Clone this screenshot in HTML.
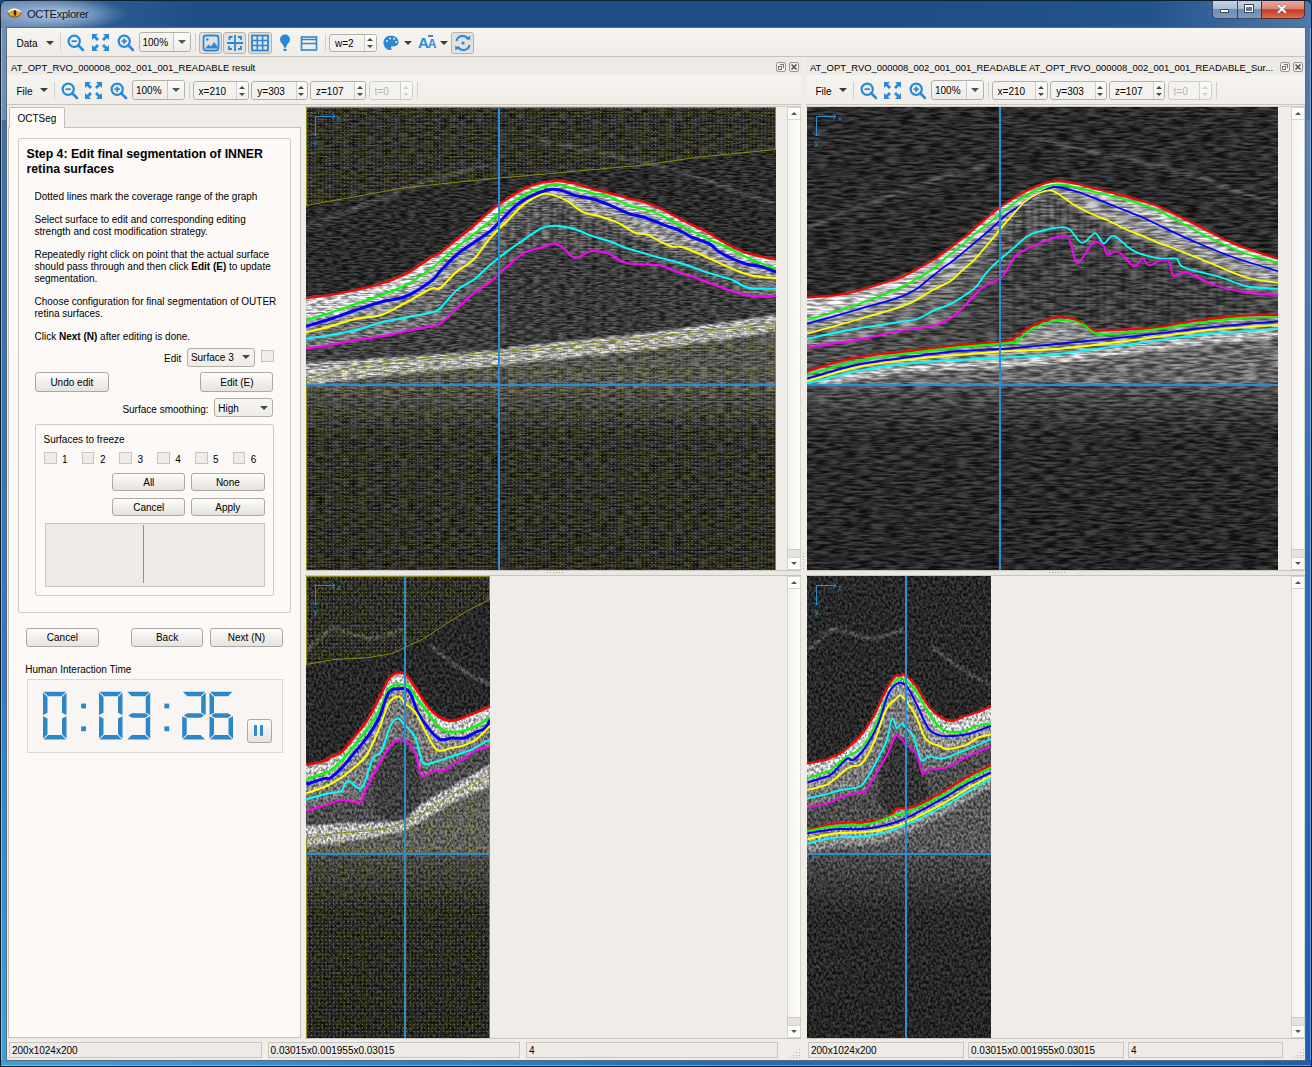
<!DOCTYPE html><html><head><meta charset="utf-8"><style>
html,body{margin:0;padding:0}
body{width:1312px;height:1067px;overflow:hidden;position:relative;font-family:"Liberation Sans", sans-serif;font-size:10px;background:#1b4c86}
</style></head><body>
<div style="position:absolute;left:0px;top:0px;width:1312px;height:1067px;box-sizing:border-box;border:1px solid #0f1e30;border-radius:6px 6px 0 0;background:linear-gradient(90deg,#7090b8 0px,#5f84b2 30px,#2a5a90 110px,#1f4e86 200px,#1d4e86 900px,#22548c 1150px,#4f7aab 1312px);"></div>
<div style="position:absolute;left:1px;top:1040px;width:1310px;height:26px;background:linear-gradient(90deg,#3aa2d8,#2d8fd0 300px,#1f6fc0 700px,#1d5fb0 1312px);"></div>
<div style="position:absolute;left:1px;top:120px;width:6px;height:930px;background:linear-gradient(#3f6ea5,#2d7cc4 60%,#3aa2d8);"></div>
<div style="position:absolute;left:1305px;top:120px;width:6px;height:930px;background:linear-gradient(#5b85b3,#2a6db8 50%,#1d5fb0);"></div>
<div style="position:absolute;left:0px;top:0px;width:200px;height:28px;background:radial-gradient(ellipse 70px 16px at 58px 14px,rgba(220,235,250,0.7),rgba(220,235,250,0) 100%)"></div>
<svg style="position:absolute;left:7px;top:7px;" width="16" height="12" viewBox="7 7 16 12"><ellipse cx="14.5" cy="13" rx="6.5" ry="4" fill="#e6a22a" stroke="#6b3a10" stroke-width="0.8"/><ellipse cx="15" cy="13" rx="1.3" ry="3" fill="#402008"/><path d="M8 12 q6 -6 13 0" fill="none" stroke="#fff" stroke-width="1.2"/></svg>
<div style="position:absolute;left:27px;top:7.70px;font-size:11.2px;line-height:13.44px;font-weight:normal;color:#10182a;white-space:nowrap;letter-spacing:-0.35px;">OCTExplorer</div>
<div style="position:absolute;left:1212px;top:1px;width:26px;height:18px;box-sizing:border-box;border:1px solid #3a4a60;border-top:none;border-radius:0 0 0 5px;background:linear-gradient(#c5d3e3,#a9bdd3 45%,#6d8fb5 50%,#7b9cc0);"></div>
<div style="position:absolute;left:1237px;top:1px;width:25px;height:18px;box-sizing:border-box;border:1px solid #3a4a60;border-top:none;background:linear-gradient(#c5d3e3,#a9bdd3 45%,#6d8fb5 50%,#7b9cc0);"></div>
<div style="position:absolute;left:1261px;top:1px;width:44px;height:18px;box-sizing:border-box;border:1px solid #5a2a20;border-top:none;border-radius:0 0 5px 0;background:linear-gradient(#e9a99b,#d98676 45%,#c43c1f 52%,#d8705a);"></div>
<div style="position:absolute;left:1220px;top:9px;width:9px;height:4px;box-sizing:border-box;background:#fff;border:1px solid #404850;"></div>
<div style="position:absolute;left:1244px;top:4px;width:10px;height:9px;box-sizing:border-box;border:1px solid #404850;background:#fff;"><div style="position:absolute;left:1px;top:2px;width:6px;height:4px;background:#5879a0"></div></div>
<div style="position:absolute;left:1276px;top:1px;font:bold 14px/16px 'Liberation Sans',sans-serif;color:#fff;text-shadow:0 0 1px #333">&#x2715;</div>
<div style="position:absolute;left:6px;top:27px;width:1300px;height:1034px;background:#5a6b80;"></div>
<div style="position:absolute;left:7px;top:28px;width:1298px;height:1032px;background:#f0ede8;"></div>
<div style="position:absolute;left:7px;top:28px;width:1298px;height:28px;background:linear-gradient(#f7f5f1,#efece7);"></div>
<div style="position:absolute;left:7px;top:56px;width:1298px;height:1px;background:#c6c3be;"></div>
<div style="position:absolute;left:16.5px;top:38.03px;font-size:10px;line-height:12.0px;font-weight:normal;color:#000;white-space:nowrap;">Data</div>
<div style="position:absolute;left:46.0px;top:40.5px;width:0;height:0;border-left:4.0px solid transparent;border-right:4.0px solid transparent;border-top:4.0px solid #3a3a3a"></div>
<div style="position:absolute;left:60px;top:33px;width:1px;height:18px;background:#d3d0cb;"></div>
<svg style="position:absolute;left:67px;top:34px;" width="18" height="18" viewBox="67 34 18 18"><circle cx="74.2" cy="41.2" r="5.6" fill="none" stroke="#2a88d8" stroke-width="2.2"/><line x1="78.3" y1="45.3" x2="83" y2="50" stroke="#2a88d8" stroke-width="2.6" stroke-linecap="round"/><line x1="71.5" y1="41.2" x2="76.9" y2="41.2" stroke="#2a88d8" stroke-width="1.8"/></svg>
<svg style="position:absolute;left:92px;top:34px;" width="18" height="18" viewBox="92 34 18 18"><g fill="#2a88d8">
<path d="M92 34h6l-2 2 3 3-2 2-3-3-2 2z"/>
<path d="M109 34v6l-2-2-3 3-2-2 3-3-2-2z"/>
<path d="M92 51v-6l2 2 3-3 2 2-3 3 2 2z"/>
<path d="M109 51h-6l2-2-3-3 2-2 3 3 2-2z"/></g></svg>
<svg style="position:absolute;left:117px;top:34px;" width="18" height="18" viewBox="117 34 18 18"><circle cx="124.2" cy="41.2" r="5.6" fill="none" stroke="#2a88d8" stroke-width="2.2"/><line x1="128.3" y1="45.3" x2="133" y2="50" stroke="#2a88d8" stroke-width="2.6" stroke-linecap="round"/><line x1="121.5" y1="41.2" x2="126.9" y2="41.2" stroke="#2a88d8" stroke-width="1.8"/><line x1="124.2" y1="38.5" x2="124.2" y2="43.9" stroke="#2a88d8" stroke-width="1.8"/></svg>
<div style="position:absolute;left:138.5px;top:32.3px;width:52.0px;height:19.800000000000004px;box-sizing:border-box;border:1px solid #b3b0ab;border-radius:3px;background:linear-gradient(#f7f5f2,#efece8);"></div>
<div style="position:absolute;left:172.5px;top:33.3px;width:17.0px;height:17.800000000000004px;box-sizing:border-box;border-left:1px solid #c8c5c0;background:linear-gradient(#fbfbfa,#f0eeeb);border-radius:0 2px 2px 0"></div>
<div style="position:absolute;left:177.5px;top:40.2px;width:0;height:0;border-left:4.0px solid transparent;border-right:4.0px solid transparent;border-top:4.0px solid #555"></div>
<div style="position:absolute;left:142.5px;top:37.34px;font-size:10px;line-height:12.0px;font-weight:normal;color:#000;white-space:nowrap;">100%</div>
<div style="position:absolute;left:195px;top:33px;width:1px;height:18px;background:#d3d0cb;"></div>
<div style="position:absolute;left:199.4px;top:31.9px;width:22.400000000000006px;height:21.700000000000003px;box-sizing:border-box;border:1px solid #b5b2ad;border-radius:3px;background:#e4e1dc;"></div>
<div style="position:absolute;left:223.4px;top:31.9px;width:22.900000000000006px;height:21.700000000000003px;box-sizing:border-box;border:1px solid #b5b2ad;border-radius:3px;background:#e4e1dc;"></div>
<div style="position:absolute;left:248px;top:31.9px;width:23.5px;height:21.700000000000003px;box-sizing:border-box;border:1px solid #b5b2ad;border-radius:3px;background:#e4e1dc;"></div>
<div style="position:absolute;left:451px;top:31.9px;width:23px;height:21.700000000000003px;box-sizing:border-box;border:1px solid #b5b2ad;border-radius:3px;background:#e4e1dc;"></div>
<svg style="position:absolute;left:202px;top:34px;" width="18" height="18" viewBox="202 34 18 18"><rect x="203.5" y="35.5" width="15" height="15" rx="2.5" fill="none" stroke="#2a88d8" stroke-width="1.8"/><circle cx="207.3" cy="39.5" r="1.3" fill="#2a88d8"/><path d="M205 48.5 l3.5-4 2.5 2 3-4.5 3.5 4.5 v2 z" fill="#2a88d8"/></svg>
<svg style="position:absolute;left:226px;top:34px;" width="18" height="18" viewBox="226 34 18 18"><g stroke="#2a88d8" stroke-width="1.8" fill="none"><path d="M235 35v16M227 43h16"/><path d="M229.5 40v-3h3M238 37h3v3M241 46v3h-3M232 49h-3v-3"/></g></svg>
<svg style="position:absolute;left:250px;top:34px;" width="20" height="18" viewBox="250 34 20 18"><rect x="252" y="35.5" width="16" height="15" fill="none" stroke="#2a88d8" stroke-width="1.8"/><g stroke="#2a88d8" stroke-width="1.6"><path d="M257.3 36v14M262.6 36v14M252 40.5h16M252 45.5h16"/></g></svg>
<svg style="position:absolute;left:278px;top:33px;" width="14" height="20" viewBox="278 33 14 20"><circle cx="285" cy="39.5" r="5" fill="#2a88d8"/><path d="M281.5 42 L285 49 L288.5 42z" fill="#2a88d8"/><rect x="283.5" y="49" width="3" height="2" fill="#2a88d8"/></svg>
<svg style="position:absolute;left:300px;top:35px;" width="18" height="16" viewBox="300 35 18 16"><rect x="301.5" y="37" width="15" height="13" fill="none" stroke="#2a88d8" stroke-width="1.6"/><path d="M301.5 39.5h15M301.5 43.5h15" stroke="#2a88d8" stroke-width="1.6"/></svg>
<div style="position:absolute;left:325px;top:34px;width:1px;height:17px;background:#d3d0cb;"></div>
<div style="position:absolute;left:329px;top:33.7px;width:48px;height:18.299999999999997px;box-sizing:border-box;border:1px solid #b3b0ab;border-radius:3px;background:#f4f2ee;"></div>
<div style="position:absolute;left:364px;top:34.7px;width:12px;height:16.299999999999997px;box-sizing:border-box;border-left:1px solid #d0cdc8;background:linear-gradient(#fdfdfc,#f2f0ed);border-radius:0 2px 2px 0"></div>
<div style="position:absolute;left:367.0px;top:38.1px;width:0;height:0;border-left:3.5px solid transparent;border-right:3.5px solid transparent;border-bottom:3.5px solid #4a4a4a"></div>
<div style="position:absolute;left:367.0px;top:45.1px;width:0;height:0;border-left:3.5px solid transparent;border-right:3.5px solid transparent;border-top:3.5px solid #4a4a4a"></div>
<div style="position:absolute;left:335px;top:37.98px;font-size:10px;line-height:12.0px;font-weight:normal;color:#000;white-space:nowrap;">w=2</div>
<svg style="position:absolute;left:382px;top:34px;" width="18" height="18" viewBox="382 34 18 18"><path d="M391 35.5 c-4.5 0 -7.5 3.3 -7.5 7.3 c0 4 3 7.3 6.8 7.3 c1.3 0 1.6-1 1-1.8 c-.7-.9 -.3-2 1-2 h2 c2.5 0 4.3-1.7 4.3-4 c0-3.8 -3.5-6.8 -7.6-6.8z" fill="#2a88d8"/><circle cx="387" cy="41" r="1" fill="#f0ede8"/><circle cx="390" cy="38.5" r="1" fill="#f0ede8"/><circle cx="394" cy="38.8" r="1" fill="#f0ede8"/><circle cx="396.3" cy="42" r="1" fill="#f0ede8"/></svg>
<div style="position:absolute;left:403.5px;top:40.5px;width:0;height:0;border-left:4.0px solid transparent;border-right:4.0px solid transparent;border-top:4.0px solid #3a3a3a"></div>
<div style="position:absolute;left:418px;top:34px;font:bold 15px/18px 'Liberation Sans',sans-serif;color:#2a88d8;letter-spacing:-1px">A<span style="font-size:12px">A</span></div>
<div style="position:absolute;left:428px;top:35px;width:5px;height:1.5px;background:#2a88d8"></div>
<div style="position:absolute;left:440.0px;top:40.5px;width:0;height:0;border-left:4.0px solid transparent;border-right:4.0px solid transparent;border-top:4.0px solid #3a3a3a"></div>
<svg style="position:absolute;left:453px;top:34px;" width="20" height="18" viewBox="453 34 20 18"><g fill="none" stroke="#2a88d8" stroke-width="2"><path d="M456.5 41 a6.3 6.3 0 0 1 11.8 -1.5"/><path d="M469.5 45 a6.3 6.3 0 0 1 -11.8 1.5"/></g><path d="M466 38.5 l4 -3 .5 4.5z M459.5 47.5 l-4 3 -.5 -4.5z" fill="#2a88d8"/><circle cx="463" cy="43" r="1.6" fill="#2a88d8"/></svg>
<div style="position:absolute;left:7px;top:57px;width:794px;height:18px;background:#eeebe6;"></div>
<div style="position:absolute;left:11px;top:62.01px;font-size:9.5px;line-height:11.4px;font-weight:normal;color:#000;white-space:nowrap;">AT_OPT_RVO_000008_002_001_001_READABLE result</div>
<div style="position:absolute;left:776px;top:62px;width:10px;height:10px;box-sizing:border-box;border:1px solid #9a9895;border-radius:2px;background:#f2f0ec;"><div style="position:absolute;left:1px;top:3px;width:4px;height:4px;border:1px solid #777;box-sizing:border-box"></div><div style="position:absolute;left:3px;top:1px;width:4px;height:4px;border:1px solid #777;box-sizing:border-box;border-left:none;border-bottom:none"></div></div>
<div style="position:absolute;left:789px;top:62px;width:10px;height:10px;box-sizing:border-box;border:1px solid #9a9895;border-radius:2px;background:#f2f0ec;"><svg style="position:absolute;left:0;top:0" width="8" height="8"><path d="M1.5 1.5L6.5 6.5M6.5 1.5L1.5 6.5" stroke="#555" stroke-width="1.6"/></svg></div>
<div style="position:absolute;left:7px;top:75px;width:794px;height:29px;background:linear-gradient(#f5f3ef,#f1eee9);"></div>
<div style="position:absolute;left:7px;top:104px;width:794px;height:1px;background:#c9c6c1;"></div>
<div style="position:absolute;left:16.5px;top:85.53px;font-size:10px;line-height:12.0px;font-weight:normal;color:#000;white-space:nowrap;">File</div>
<div style="position:absolute;left:39.5px;top:88.0px;width:0;height:0;border-left:4.0px solid transparent;border-right:4.0px solid transparent;border-top:4.0px solid #3a3a3a"></div>
<div style="position:absolute;left:53.5px;top:82px;width:1px;height:17px;background:#d3d0cb;"></div>
<svg style="position:absolute;left:60.5px;top:81.5px;" width="18" height="18" viewBox="60.5 81.5 18 18"><circle cx="67.7" cy="88.7" r="5.6" fill="none" stroke="#2a88d8" stroke-width="2.2"/><line x1="71.8" y1="92.8" x2="76.5" y2="97.5" stroke="#2a88d8" stroke-width="2.6" stroke-linecap="round"/><line x1="65.0" y1="88.7" x2="70.4" y2="88.7" stroke="#2a88d8" stroke-width="1.8"/></svg>
<svg style="position:absolute;left:85px;top:81.5px;" width="18" height="18" viewBox="85 81.5 18 18"><g fill="#2a88d8">
<path d="M85 81.5h6l-2 2 3 3-2 2-3-3-2 2z"/>
<path d="M102 81.5v6l-2-2-3 3-2-2 3-3-2-2z"/>
<path d="M85 98.5v-6l2 2 3-3 2 2-3 3 2 2z"/>
<path d="M102 98.5h-6l2-2-3-3 2-2 3 3 2-2z"/></g></svg>
<svg style="position:absolute;left:110px;top:81.5px;" width="18" height="18" viewBox="110 81.5 18 18"><circle cx="117.2" cy="88.7" r="5.6" fill="none" stroke="#2a88d8" stroke-width="2.2"/><line x1="121.3" y1="92.8" x2="126" y2="97.5" stroke="#2a88d8" stroke-width="2.6" stroke-linecap="round"/><line x1="114.5" y1="88.7" x2="119.9" y2="88.7" stroke="#2a88d8" stroke-width="1.8"/><line x1="117.2" y1="86.0" x2="117.2" y2="91.4" stroke="#2a88d8" stroke-width="1.8"/></svg>
<div style="position:absolute;left:132px;top:80px;width:52.5px;height:19.5px;box-sizing:border-box;border:1px solid #b3b0ab;border-radius:3px;background:linear-gradient(#f7f5f2,#efece8);"></div>
<div style="position:absolute;left:166.5px;top:81px;width:17.0px;height:17.5px;box-sizing:border-box;border-left:1px solid #c8c5c0;background:linear-gradient(#fbfbfa,#f0eeeb);border-radius:0 2px 2px 0"></div>
<div style="position:absolute;left:171.5px;top:87.75px;width:0;height:0;border-left:4.0px solid transparent;border-right:4.0px solid transparent;border-top:4.0px solid #555"></div>
<div style="position:absolute;left:136px;top:84.88px;font-size:10px;line-height:12.0px;font-weight:normal;color:#000;white-space:nowrap;">100%</div>
<div style="position:absolute;left:188.5px;top:82px;width:1px;height:17px;background:#d3d0cb;"></div>
<div style="position:absolute;left:192.6px;top:81px;width:56.400000000000006px;height:19px;box-sizing:border-box;border:1px solid #b3b0ab;border-radius:3px;background:#f4f2ee;"></div>
<div style="position:absolute;left:236px;top:82px;width:12px;height:17px;box-sizing:border-box;border-left:1px solid #d0cdc8;background:linear-gradient(#fdfdfc,#f2f0ed);border-radius:0 2px 2px 0"></div>
<div style="position:absolute;left:239.0px;top:85.75px;width:0;height:0;border-left:3.5px solid transparent;border-right:3.5px solid transparent;border-bottom:3.5px solid #4a4a4a"></div>
<div style="position:absolute;left:239.0px;top:92.75px;width:0;height:0;border-left:3.5px solid transparent;border-right:3.5px solid transparent;border-top:3.5px solid #4a4a4a"></div>
<div style="position:absolute;left:198.6px;top:85.63px;font-size:10px;line-height:12.0px;font-weight:normal;color:#000;white-space:nowrap;">x=210</div>
<div style="position:absolute;left:251.3px;top:81px;width:56.69999999999999px;height:19px;box-sizing:border-box;border:1px solid #b3b0ab;border-radius:3px;background:#f4f2ee;"></div>
<div style="position:absolute;left:295.5px;top:82px;width:11.5px;height:17px;box-sizing:border-box;border-left:1px solid #d0cdc8;background:linear-gradient(#fdfdfc,#f2f0ed);border-radius:0 2px 2px 0"></div>
<div style="position:absolute;left:298.25px;top:85.75px;width:0;height:0;border-left:3.5px solid transparent;border-right:3.5px solid transparent;border-bottom:3.5px solid #4a4a4a"></div>
<div style="position:absolute;left:298.25px;top:92.75px;width:0;height:0;border-left:3.5px solid transparent;border-right:3.5px solid transparent;border-top:3.5px solid #4a4a4a"></div>
<div style="position:absolute;left:257.3px;top:85.63px;font-size:10px;line-height:12.0px;font-weight:normal;color:#000;white-space:nowrap;">y=303</div>
<div style="position:absolute;left:310px;top:81px;width:56.39999999999998px;height:19px;box-sizing:border-box;border:1px solid #b3b0ab;border-radius:3px;background:#f4f2ee;"></div>
<div style="position:absolute;left:353.8px;top:82px;width:11.599999999999966px;height:17px;box-sizing:border-box;border-left:1px solid #d0cdc8;background:linear-gradient(#fdfdfc,#f2f0ed);border-radius:0 2px 2px 0"></div>
<div style="position:absolute;left:356.6px;top:85.75px;width:0;height:0;border-left:3.5px solid transparent;border-right:3.5px solid transparent;border-bottom:3.5px solid #4a4a4a"></div>
<div style="position:absolute;left:356.6px;top:92.75px;width:0;height:0;border-left:3.5px solid transparent;border-right:3.5px solid transparent;border-top:3.5px solid #4a4a4a"></div>
<div style="position:absolute;left:316px;top:85.63px;font-size:10px;line-height:12.0px;font-weight:normal;color:#000;white-space:nowrap;">z=107</div>
<div style="position:absolute;left:368.6px;top:81px;width:44.0px;height:19px;box-sizing:border-box;border:1px solid #cfccc7;border-radius:3px;background:#f4f2ee;"></div>
<div style="position:absolute;left:399.5px;top:82px;width:12.100000000000023px;height:17px;box-sizing:border-box;border-left:1px solid #d0cdc8;background:linear-gradient(#fdfdfc,#f2f0ed);border-radius:0 2px 2px 0"></div>
<div style="position:absolute;left:402.55px;top:85.75px;width:0;height:0;border-left:3.5px solid transparent;border-right:3.5px solid transparent;border-bottom:3.5px solid #d2d0cc"></div>
<div style="position:absolute;left:402.55px;top:92.75px;width:0;height:0;border-left:3.5px solid transparent;border-right:3.5px solid transparent;border-top:3.5px solid #d2d0cc"></div>
<div style="position:absolute;left:374.6px;top:85.63px;font-size:10px;line-height:12.0px;font-weight:normal;color:#b5b5b5;white-space:nowrap;">t=0</div>
<div style="position:absolute;left:416.7px;top:82px;width:1px;height:17px;background:#d3d0cb;"></div>
<div style="position:absolute;left:7px;top:1038px;width:794px;height:22px;background:#f0ede8;"></div>
<div style="position:absolute;left:9px;top:1042px;width:252.5px;height:16px;box-sizing:border-box;border:1px solid #c9c6c1;background:#eeebe6;"></div>
<div style="position:absolute;left:12px;top:1045.04px;font-size:10px;line-height:12.0px;font-weight:normal;color:#000;white-space:nowrap;">200x1024x200</div>
<div style="position:absolute;left:267.6px;top:1042px;width:252.39999999999998px;height:16px;box-sizing:border-box;border:1px solid #c9c6c1;background:#eeebe6;"></div>
<div style="position:absolute;left:270.6px;top:1045.04px;font-size:10px;line-height:12.0px;font-weight:normal;color:#000;white-space:nowrap;">0.03015x0.001955x0.03015</div>
<div style="position:absolute;left:526px;top:1042px;width:252px;height:16px;box-sizing:border-box;border:1px solid #c9c6c1;background:#eeebe6;"></div>
<div style="position:absolute;left:529px;top:1045.04px;font-size:10px;line-height:12.0px;font-weight:normal;color:#000;white-space:nowrap;">4</div>
<div style="position:absolute;left:806px;top:57px;width:499px;height:18px;background:#eeebe6;"></div>
<div style="position:absolute;left:810px;top:62.06px;font-size:9.45px;line-height:11.34px;font-weight:normal;color:#000;white-space:nowrap;">AT_OPT_RVO_000008_002_001_001_READABLE AT_OPT_RVO_000008_002_001_001_READABLE_Sur...</div>
<div style="position:absolute;left:1280px;top:62px;width:10px;height:10px;box-sizing:border-box;border:1px solid #9a9895;border-radius:2px;background:#f2f0ec;"><div style="position:absolute;left:1px;top:3px;width:4px;height:4px;border:1px solid #777;box-sizing:border-box"></div><div style="position:absolute;left:3px;top:1px;width:4px;height:4px;border:1px solid #777;box-sizing:border-box;border-left:none;border-bottom:none"></div></div>
<div style="position:absolute;left:1293px;top:62px;width:10px;height:10px;box-sizing:border-box;border:1px solid #9a9895;border-radius:2px;background:#f2f0ec;"><svg style="position:absolute;left:0;top:0" width="8" height="8"><path d="M1.5 1.5L6.5 6.5M6.5 1.5L1.5 6.5" stroke="#555" stroke-width="1.6"/></svg></div>
<div style="position:absolute;left:806px;top:75px;width:499px;height:29px;background:linear-gradient(#f5f3ef,#f1eee9);"></div>
<div style="position:absolute;left:806px;top:104px;width:499px;height:1px;background:#c9c6c1;"></div>
<div style="position:absolute;left:815.5px;top:85.53px;font-size:10px;line-height:12.0px;font-weight:normal;color:#000;white-space:nowrap;">File</div>
<div style="position:absolute;left:838.5px;top:88.0px;width:0;height:0;border-left:4.0px solid transparent;border-right:4.0px solid transparent;border-top:4.0px solid #3a3a3a"></div>
<div style="position:absolute;left:852.5px;top:82px;width:1px;height:17px;background:#d3d0cb;"></div>
<svg style="position:absolute;left:859.5px;top:81.5px;" width="18" height="18" viewBox="859.5 81.5 18 18"><circle cx="866.7" cy="88.7" r="5.6" fill="none" stroke="#2a88d8" stroke-width="2.2"/><line x1="870.8" y1="92.8" x2="875.5" y2="97.5" stroke="#2a88d8" stroke-width="2.6" stroke-linecap="round"/><line x1="864.0" y1="88.7" x2="869.4" y2="88.7" stroke="#2a88d8" stroke-width="1.8"/></svg>
<svg style="position:absolute;left:884px;top:81.5px;" width="18" height="18" viewBox="884 81.5 18 18"><g fill="#2a88d8">
<path d="M884 81.5h6l-2 2 3 3-2 2-3-3-2 2z"/>
<path d="M901 81.5v6l-2-2-3 3-2-2 3-3-2-2z"/>
<path d="M884 98.5v-6l2 2 3-3 2 2-3 3 2 2z"/>
<path d="M901 98.5h-6l2-2-3-3 2-2 3 3 2-2z"/></g></svg>
<svg style="position:absolute;left:909px;top:81.5px;" width="18" height="18" viewBox="909 81.5 18 18"><circle cx="916.2" cy="88.7" r="5.6" fill="none" stroke="#2a88d8" stroke-width="2.2"/><line x1="920.3" y1="92.8" x2="925" y2="97.5" stroke="#2a88d8" stroke-width="2.6" stroke-linecap="round"/><line x1="913.5" y1="88.7" x2="918.9" y2="88.7" stroke="#2a88d8" stroke-width="1.8"/><line x1="916.2" y1="86.0" x2="916.2" y2="91.4" stroke="#2a88d8" stroke-width="1.8"/></svg>
<div style="position:absolute;left:931px;top:80px;width:52.5px;height:19.5px;box-sizing:border-box;border:1px solid #b3b0ab;border-radius:3px;background:linear-gradient(#f7f5f2,#efece8);"></div>
<div style="position:absolute;left:965.5px;top:81px;width:17.0px;height:17.5px;box-sizing:border-box;border-left:1px solid #c8c5c0;background:linear-gradient(#fbfbfa,#f0eeeb);border-radius:0 2px 2px 0"></div>
<div style="position:absolute;left:970.5px;top:87.75px;width:0;height:0;border-left:4.0px solid transparent;border-right:4.0px solid transparent;border-top:4.0px solid #555"></div>
<div style="position:absolute;left:935px;top:84.88px;font-size:10px;line-height:12.0px;font-weight:normal;color:#000;white-space:nowrap;">100%</div>
<div style="position:absolute;left:987.5px;top:82px;width:1px;height:17px;background:#d3d0cb;"></div>
<div style="position:absolute;left:991.6px;top:81px;width:56.39999999999998px;height:19px;box-sizing:border-box;border:1px solid #b3b0ab;border-radius:3px;background:#f4f2ee;"></div>
<div style="position:absolute;left:1035px;top:82px;width:12px;height:17px;box-sizing:border-box;border-left:1px solid #d0cdc8;background:linear-gradient(#fdfdfc,#f2f0ed);border-radius:0 2px 2px 0"></div>
<div style="position:absolute;left:1038.0px;top:85.75px;width:0;height:0;border-left:3.5px solid transparent;border-right:3.5px solid transparent;border-bottom:3.5px solid #4a4a4a"></div>
<div style="position:absolute;left:1038.0px;top:92.75px;width:0;height:0;border-left:3.5px solid transparent;border-right:3.5px solid transparent;border-top:3.5px solid #4a4a4a"></div>
<div style="position:absolute;left:997.6px;top:85.63px;font-size:10px;line-height:12.0px;font-weight:normal;color:#000;white-space:nowrap;">x=210</div>
<div style="position:absolute;left:1050.3px;top:81px;width:56.700000000000045px;height:19px;box-sizing:border-box;border:1px solid #b3b0ab;border-radius:3px;background:#f4f2ee;"></div>
<div style="position:absolute;left:1094.5px;top:82px;width:11.5px;height:17px;box-sizing:border-box;border-left:1px solid #d0cdc8;background:linear-gradient(#fdfdfc,#f2f0ed);border-radius:0 2px 2px 0"></div>
<div style="position:absolute;left:1097.25px;top:85.75px;width:0;height:0;border-left:3.5px solid transparent;border-right:3.5px solid transparent;border-bottom:3.5px solid #4a4a4a"></div>
<div style="position:absolute;left:1097.25px;top:92.75px;width:0;height:0;border-left:3.5px solid transparent;border-right:3.5px solid transparent;border-top:3.5px solid #4a4a4a"></div>
<div style="position:absolute;left:1056.3px;top:85.63px;font-size:10px;line-height:12.0px;font-weight:normal;color:#000;white-space:nowrap;">y=303</div>
<div style="position:absolute;left:1109px;top:81px;width:56.40000000000009px;height:19px;box-sizing:border-box;border:1px solid #b3b0ab;border-radius:3px;background:#f4f2ee;"></div>
<div style="position:absolute;left:1152.8px;top:82px;width:11.600000000000136px;height:17px;box-sizing:border-box;border-left:1px solid #d0cdc8;background:linear-gradient(#fdfdfc,#f2f0ed);border-radius:0 2px 2px 0"></div>
<div style="position:absolute;left:1155.6px;top:85.75px;width:0;height:0;border-left:3.5px solid transparent;border-right:3.5px solid transparent;border-bottom:3.5px solid #4a4a4a"></div>
<div style="position:absolute;left:1155.6px;top:92.75px;width:0;height:0;border-left:3.5px solid transparent;border-right:3.5px solid transparent;border-top:3.5px solid #4a4a4a"></div>
<div style="position:absolute;left:1115px;top:85.63px;font-size:10px;line-height:12.0px;font-weight:normal;color:#000;white-space:nowrap;">z=107</div>
<div style="position:absolute;left:1167.6px;top:81px;width:44.0px;height:19px;box-sizing:border-box;border:1px solid #cfccc7;border-radius:3px;background:#f4f2ee;"></div>
<div style="position:absolute;left:1198.5px;top:82px;width:12.099999999999909px;height:17px;box-sizing:border-box;border-left:1px solid #d0cdc8;background:linear-gradient(#fdfdfc,#f2f0ed);border-radius:0 2px 2px 0"></div>
<div style="position:absolute;left:1201.55px;top:85.75px;width:0;height:0;border-left:3.5px solid transparent;border-right:3.5px solid transparent;border-bottom:3.5px solid #d2d0cc"></div>
<div style="position:absolute;left:1201.55px;top:92.75px;width:0;height:0;border-left:3.5px solid transparent;border-right:3.5px solid transparent;border-top:3.5px solid #d2d0cc"></div>
<div style="position:absolute;left:1173.6px;top:85.63px;font-size:10px;line-height:12.0px;font-weight:normal;color:#b5b5b5;white-space:nowrap;">t=0</div>
<div style="position:absolute;left:1215.7px;top:82px;width:1px;height:17px;background:#d3d0cb;"></div>
<div style="position:absolute;left:806px;top:1038px;width:499px;height:22px;background:#f0ede8;"></div>
<div style="position:absolute;left:808px;top:1042px;width:156px;height:16px;box-sizing:border-box;border:1px solid #c9c6c1;background:#eeebe6;"></div>
<div style="position:absolute;left:811px;top:1045.04px;font-size:10px;line-height:12.0px;font-weight:normal;color:#000;white-space:nowrap;">200x1024x200</div>
<div style="position:absolute;left:968px;top:1042px;width:156px;height:16px;box-sizing:border-box;border:1px solid #c9c6c1;background:#eeebe6;"></div>
<div style="position:absolute;left:971px;top:1045.04px;font-size:10px;line-height:12.0px;font-weight:normal;color:#000;white-space:nowrap;">0.03015x0.001955x0.03015</div>
<div style="position:absolute;left:1128px;top:1042px;width:155px;height:16px;box-sizing:border-box;border:1px solid #c9c6c1;background:#eeebe6;"></div>
<div style="position:absolute;left:1131px;top:1045.04px;font-size:10px;line-height:12.0px;font-weight:normal;color:#000;white-space:nowrap;">4</div>
<div style="position:absolute;left:801px;top:57px;width:5px;height:1003px;background:#f0ede8;"></div>
<div style="position:absolute;left:7px;top:105px;width:295px;height:933px;background:#f0ede8;"></div>
<div style="position:absolute;left:8px;top:127px;width:293px;height:911px;box-sizing:border-box;border:1px solid #c3c0bb;background:#fcf9f6;"></div>
<div style="position:absolute;left:8.5px;top:106.5px;width:56px;height:21px;box-sizing:border-box;border:1px solid #c3c0bb;border-bottom:none;border-radius:2px 2px 0 0;background:#fcf9f6;"></div>
<div style="position:absolute;left:17.5px;top:113.23px;font-size:10px;line-height:12.0px;font-weight:normal;color:#000;white-space:nowrap;">OCTSeg</div>
<div style="position:absolute;left:17.6px;top:137.8px;width:273.5px;height:475.5px;box-sizing:border-box;border:1px solid #cfccc7;border-radius:2px;"></div>
<div style="position:absolute;left:26.5px;top:147.06px;font-size:12.3px;line-height:14.76px;font-weight:bold;color:#000;white-space:nowrap;">Step 4: Edit final segmentation of INNER</div>
<div style="position:absolute;left:26.5px;top:161.56px;font-size:12.3px;line-height:14.76px;font-weight:bold;color:#000;white-space:nowrap;">retina surfaces</div>
<div style="position:absolute;left:34.5px;top:191.03px;font-size:10px;line-height:12.0px;font-weight:normal;color:#000;white-space:nowrap;">Dotted lines mark the coverage range of the graph</div>
<div style="position:absolute;left:34.5px;top:214.03px;font-size:10px;line-height:12.0px;font-weight:normal;color:#000;white-space:nowrap;">Select surface to edit and corresponding editing</div>
<div style="position:absolute;left:34.5px;top:226.03px;font-size:10px;line-height:12.0px;font-weight:normal;color:#000;white-space:nowrap;">strength and cost modification strategy.</div>
<div style="position:absolute;left:34.5px;top:249.23px;font-size:10px;line-height:12.0px;font-weight:normal;color:#000;white-space:nowrap;">Repeatedly right click on point that the actual surface</div>
<div style="position:absolute;left:34.5px;top:260.84px;font-size:10px;line-height:12.0px;font-weight:normal;color:#000;white-space:nowrap;">should pass through and then click <b>Edit (E)</b> to update</div>
<div style="position:absolute;left:34.5px;top:272.54px;font-size:10px;line-height:12.0px;font-weight:normal;color:#000;white-space:nowrap;">segmentation.</div>
<div style="position:absolute;left:34.5px;top:296.04px;font-size:10px;line-height:12.0px;font-weight:normal;color:#000;white-space:nowrap;">Choose configuration for final segmentation of OUTER</div>
<div style="position:absolute;left:34.5px;top:307.74px;font-size:10px;line-height:12.0px;font-weight:normal;color:#000;white-space:nowrap;">retina surfaces.</div>
<div style="position:absolute;left:34.5px;top:330.94px;font-size:10px;line-height:12.0px;font-weight:normal;color:#000;white-space:nowrap;">Click <b>Next (N)</b> after editing is done.</div>
<div style="position:absolute;left:164px;top:352.84px;font-size:10px;line-height:12.0px;font-weight:normal;color:#000;white-space:nowrap;">Edit</div>
<div style="position:absolute;left:186.9px;top:347.5px;width:68.5px;height:19.19999999999999px;box-sizing:border-box;border:1px solid #b3b0ab;border-radius:3px;background:linear-gradient(#f7f5f2,#efece8);"></div>
<div style="position:absolute;left:190.9px;top:352.24px;font-size:10px;line-height:12.0px;font-weight:normal;color:#000;white-space:nowrap;">Surface 3</div>
<div style="position:absolute;left:242.0px;top:355.0px;width:0;height:0;border-left:4.0px solid transparent;border-right:4.0px solid transparent;border-top:4.0px solid #444"></div>
<div style="position:absolute;left:261px;top:349.6px;width:13px;height:12.8px;box-sizing:border-box;border:1px solid #c6c3be;background:#f1eeea;"></div>
<div style="position:absolute;left:35px;top:372.4px;width:73.6px;height:19.200000000000045px;box-sizing:border-box;border:1px solid #aca9a4;border-radius:3px;background:linear-gradient(#fefefd,#f1efec 50%,#e6e3df);"></div>
<div style="position:absolute;left:35px;top:377.14px;width:73.6px;text-align:center;font-size:10px;line-height:12.0px;font-weight:normal;color:#000;white-space:nowrap">Undo edit</div>
<div style="position:absolute;left:200.3px;top:372.4px;width:73.19999999999999px;height:19.200000000000045px;box-sizing:border-box;border:1px solid #aca9a4;border-radius:3px;background:linear-gradient(#fefefd,#f1efec 50%,#e6e3df);"></div>
<div style="position:absolute;left:200.3px;top:377.14px;width:73.19999999999999px;text-align:center;font-size:10px;line-height:12.0px;font-weight:normal;color:#000;white-space:nowrap">Edit (E)</div>
<div style="position:absolute;left:122.4px;top:404.14px;font-size:10px;line-height:12.0px;font-weight:normal;color:#000;white-space:nowrap;">Surface smoothing:</div>
<div style="position:absolute;left:214.2px;top:397.6px;width:59.30000000000001px;height:19.69999999999999px;box-sizing:border-box;border:1px solid #b3b0ab;border-radius:3px;background:linear-gradient(#f7f5f2,#efece8);"></div>
<div style="position:absolute;left:218.2px;top:402.59px;font-size:10px;line-height:12.0px;font-weight:normal;color:#000;white-space:nowrap;">High</div>
<div style="position:absolute;left:259.5px;top:405.5px;width:0;height:0;border-left:4.0px solid transparent;border-right:4.0px solid transparent;border-top:4.0px solid #444"></div>
<div style="position:absolute;left:35px;top:423.5px;width:239px;height:172px;box-sizing:border-box;border:1px solid #cfccc7;border-radius:2px;"></div>
<div style="position:absolute;left:43.5px;top:433.84px;font-size:10px;line-height:12.0px;font-weight:normal;color:#000;white-space:nowrap;">Surfaces to freeze</div>
<div style="position:absolute;left:44.1px;top:452.3px;width:12.6px;height:12.2px;box-sizing:border-box;border:1px solid #c9c6c1;background:#f0ede9;"></div>
<div style="position:absolute;left:62.1px;top:454.14px;font-size:10px;line-height:12.0px;font-weight:normal;color:#000;white-space:nowrap;">1</div>
<div style="position:absolute;left:81.9px;top:452.3px;width:12.6px;height:12.2px;box-sizing:border-box;border:1px solid #c9c6c1;background:#f0ede9;"></div>
<div style="position:absolute;left:99.9px;top:454.14px;font-size:10px;line-height:12.0px;font-weight:normal;color:#000;white-space:nowrap;">2</div>
<div style="position:absolute;left:119.4px;top:452.3px;width:12.6px;height:12.2px;box-sizing:border-box;border:1px solid #c9c6c1;background:#f0ede9;"></div>
<div style="position:absolute;left:137.4px;top:454.14px;font-size:10px;line-height:12.0px;font-weight:normal;color:#000;white-space:nowrap;">3</div>
<div style="position:absolute;left:157.2px;top:452.3px;width:12.6px;height:12.2px;box-sizing:border-box;border:1px solid #c9c6c1;background:#f0ede9;"></div>
<div style="position:absolute;left:175.2px;top:454.14px;font-size:10px;line-height:12.0px;font-weight:normal;color:#000;white-space:nowrap;">4</div>
<div style="position:absolute;left:195px;top:452.3px;width:12.6px;height:12.2px;box-sizing:border-box;border:1px solid #c9c6c1;background:#f0ede9;"></div>
<div style="position:absolute;left:213px;top:454.14px;font-size:10px;line-height:12.0px;font-weight:normal;color:#000;white-space:nowrap;">5</div>
<div style="position:absolute;left:232.8px;top:452.3px;width:12.6px;height:12.2px;box-sizing:border-box;border:1px solid #c9c6c1;background:#f0ede9;"></div>
<div style="position:absolute;left:250.8px;top:454.14px;font-size:10px;line-height:12.0px;font-weight:normal;color:#000;white-space:nowrap;">6</div>
<div style="position:absolute;left:112.2px;top:473px;width:73.2px;height:18.399999999999977px;box-sizing:border-box;border:1px solid #aca9a4;border-radius:3px;background:linear-gradient(#fefefd,#f1efec 50%,#e6e3df);"></div>
<div style="position:absolute;left:112.2px;top:477.34px;width:73.2px;text-align:center;font-size:10px;line-height:12.0px;font-weight:normal;color:#000;white-space:nowrap">All</div>
<div style="position:absolute;left:191.1px;top:473px;width:73.50000000000003px;height:18.399999999999977px;box-sizing:border-box;border:1px solid #aca9a4;border-radius:3px;background:linear-gradient(#fefefd,#f1efec 50%,#e6e3df);"></div>
<div style="position:absolute;left:191.1px;top:477.34px;width:73.50000000000003px;text-align:center;font-size:10px;line-height:12.0px;font-weight:normal;color:#000;white-space:nowrap">None</div>
<div style="position:absolute;left:112.2px;top:497.8px;width:73.2px;height:18.599999999999966px;box-sizing:border-box;border:1px solid #aca9a4;border-radius:3px;background:linear-gradient(#fefefd,#f1efec 50%,#e6e3df);"></div>
<div style="position:absolute;left:112.2px;top:502.24px;width:73.2px;text-align:center;font-size:10px;line-height:12.0px;font-weight:normal;color:#000;white-space:nowrap">Cancel</div>
<div style="position:absolute;left:191.1px;top:497.8px;width:73.50000000000003px;height:18.599999999999966px;box-sizing:border-box;border:1px solid #aca9a4;border-radius:3px;background:linear-gradient(#fefefd,#f1efec 50%,#e6e3df);"></div>
<div style="position:absolute;left:191.1px;top:502.24px;width:73.50000000000003px;text-align:center;font-size:10px;line-height:12.0px;font-weight:normal;color:#000;white-space:nowrap">Apply</div>
<div style="position:absolute;left:44.6px;top:522.5px;width:220.2px;height:64.1px;box-sizing:border-box;border:1px solid #c9c6c1;background:#eeebe7;"></div>
<div style="position:absolute;left:143px;top:525px;width:1.4px;height:58px;background:#5a9fd4;"></div>
<div style="position:absolute;left:26px;top:627.5px;width:72.8px;height:19.0px;box-sizing:border-box;border:1px solid #aca9a4;border-radius:3px;background:linear-gradient(#fefefd,#f1efec 50%,#e6e3df);"></div>
<div style="position:absolute;left:26px;top:632.13px;width:72.8px;text-align:center;font-size:10px;line-height:12.0px;font-weight:normal;color:#000;white-space:nowrap">Cancel</div>
<div style="position:absolute;left:130.6px;top:627.5px;width:72.9px;height:19.0px;box-sizing:border-box;border:1px solid #aca9a4;border-radius:3px;background:linear-gradient(#fefefd,#f1efec 50%,#e6e3df);"></div>
<div style="position:absolute;left:130.6px;top:632.13px;width:72.9px;text-align:center;font-size:10px;line-height:12.0px;font-weight:normal;color:#000;white-space:nowrap">Back</div>
<div style="position:absolute;left:210px;top:627.5px;width:72.89999999999998px;height:19.0px;box-sizing:border-box;border:1px solid #aca9a4;border-radius:3px;background:linear-gradient(#fefefd,#f1efec 50%,#e6e3df);"></div>
<div style="position:absolute;left:210px;top:632.13px;width:72.89999999999998px;text-align:center;font-size:10px;line-height:12.0px;font-weight:normal;color:#000;white-space:nowrap">Next (N)</div>
<div style="position:absolute;left:25.2px;top:663.83px;font-size:10px;line-height:12.0px;font-weight:normal;color:#000;white-space:nowrap;">Human Interaction Time</div>
<div style="position:absolute;left:27px;top:678.5px;width:255.5px;height:74.7px;box-sizing:border-box;border:1px solid #dcd9d4;background:#f8f5f2;"></div>
<svg style="position:absolute;left:30px;top:685px;" width="210" height="60" viewBox="30 685 210 60"><path d="M43.6 691.8H65.9L61.400000000000006 696.3H48.1z M43.6 739.4H65.9L61.400000000000006 734.9H48.1z M43 692.4V714.9999999999999L47.5 712.7499999999999V696.9z M43 738.8V716.1999999999999L47.5 718.4499999999999V734.3z M66.5 692.4V714.9999999999999L62.0 712.7499999999999V696.9z M66.5 738.8V716.1999999999999L62.0 718.4499999999999V734.3z" fill="#2d86c6"/><path d="M99.6 691.8H121.9L117.4 696.3H104.1z M99.6 739.4H121.9L117.4 734.9H104.1z M99 692.4V714.9999999999999L103.5 712.7499999999999V696.9z M99 738.8V716.1999999999999L103.5 718.4499999999999V734.3z M122.5 692.4V714.9999999999999L118.0 712.7499999999999V696.9z M122.5 738.8V716.1999999999999L118.0 718.4499999999999V734.3z" fill="#2d86c6"/><path d="M127.3 691.8H149.6L145.1 696.3H131.8z M127.3 739.4H149.6L145.1 734.9H131.8z M128.3 715.5999999999999L131.8 713.3499999999999H145.1L148.6 715.5999999999999L145.1 717.8499999999999H131.8z M150.2 692.4V714.9999999999999L145.7 712.7499999999999V696.9z M150.2 738.8V716.1999999999999L145.7 718.4499999999999V734.3z" fill="#2d86c6"/><path d="M182.79999999999998 691.8H205.1L200.6 696.3H187.29999999999998z M182.79999999999998 739.4H205.1L200.6 734.9H187.29999999999998z M183.79999999999998 715.5999999999999L187.29999999999998 713.3499999999999H200.6L204.1 715.5999999999999L200.6 717.8499999999999H187.29999999999998z M182.2 738.8V716.1999999999999L186.7 718.4499999999999V734.3z M205.7 692.4V714.9999999999999L201.2 712.7499999999999V696.9z" fill="#2d86c6"/><path d="M210.1 691.8H232.4L227.9 696.3H214.6z M210.1 739.4H232.4L227.9 734.9H214.6z M211.1 715.5999999999999L214.6 713.3499999999999H227.9L231.4 715.5999999999999L227.9 717.8499999999999H214.6z M209.5 692.4V714.9999999999999L214.0 712.7499999999999V696.9z M209.5 738.8V716.1999999999999L214.0 718.4499999999999V734.3z M233.0 738.8V716.1999999999999L228.5 718.4499999999999V734.3z" fill="#2d86c6"/><rect x="81.19999999999999" y="703.6" width="4.8" height="4.8" fill="#2d86c6"/><rect x="81.19999999999999" y="726.4" width="4.8" height="4.8" fill="#2d86c6"/><rect x="164.4" y="703.6" width="4.8" height="4.8" fill="#2d86c6"/><rect x="164.4" y="726.4" width="4.8" height="4.8" fill="#2d86c6"/></svg>
<div style="position:absolute;left:246.6px;top:718.7px;width:25.2px;height:24.3px;box-sizing:border-box;border:1px solid #aca9a4;border-radius:3px;background:linear-gradient(#fefefd,#f1efec 50%,#e6e3df);"></div>
<div style="position:absolute;left:253.7px;top:725px;width:3px;height:10.7px;background:#2a88d8;border-radius:1px"></div>
<div style="position:absolute;left:260px;top:725px;width:3px;height:10.7px;background:#2a88d8;border-radius:1px"></div>
<div style="position:absolute;left:302px;top:105px;width:499px;height:933px;background:#f0ede8;"></div>
<div style="position:absolute;left:806px;top:105px;width:499px;height:933px;background:#f0ede8;"></div>
<div style="position:absolute;left:787px;top:107px;width:14px;height:463px;box-sizing:border-box;border:1px solid #d6d3ce;background:linear-gradient(90deg,#f4f2ef,#fdfdfc);"></div>
<div style="position:absolute;left:787px;top:107px;width:14px;height:13px;box-sizing:border-box;border:1px solid #d6d3ce;background:#fefefe;"></div>
<div style="position:absolute;left:790.5px;top:111.75px;width:0;height:0;border-left:3.5px solid transparent;border-right:3.5px solid transparent;border-bottom:3.5px solid #555555"></div>
<div style="position:absolute;left:787px;top:549px;width:14px;height:9px;box-sizing:border-box;border:1px solid #cfccc7;background:#e4e2df;"></div>
<div style="position:absolute;left:787px;top:557px;width:14px;height:13px;box-sizing:border-box;border:1px solid #d6d3ce;background:#fefefe;"></div>
<div style="position:absolute;left:790.5px;top:561.75px;width:0;height:0;border-left:3.5px solid transparent;border-right:3.5px solid transparent;border-top:3.5px solid #555555"></div>
<div style="position:absolute;left:787px;top:576px;width:14px;height:462px;box-sizing:border-box;border:1px solid #d6d3ce;background:linear-gradient(90deg,#f4f2ef,#fdfdfc);"></div>
<div style="position:absolute;left:787px;top:576px;width:14px;height:13px;box-sizing:border-box;border:1px solid #d6d3ce;background:#fefefe;"></div>
<div style="position:absolute;left:790.5px;top:580.75px;width:0;height:0;border-left:3.5px solid transparent;border-right:3.5px solid transparent;border-bottom:3.5px solid #555555"></div>
<div style="position:absolute;left:787px;top:1017px;width:14px;height:9px;box-sizing:border-box;border:1px solid #cfccc7;background:#e4e2df;"></div>
<div style="position:absolute;left:787px;top:1025px;width:14px;height:13px;box-sizing:border-box;border:1px solid #d6d3ce;background:#fefefe;"></div>
<div style="position:absolute;left:790.5px;top:1029.75px;width:0;height:0;border-left:3.5px solid transparent;border-right:3.5px solid transparent;border-top:3.5px solid #555555"></div>
<div style="position:absolute;left:1291px;top:107px;width:14px;height:463px;box-sizing:border-box;border:1px solid #d6d3ce;background:linear-gradient(90deg,#f4f2ef,#fdfdfc);"></div>
<div style="position:absolute;left:1291px;top:107px;width:14px;height:13px;box-sizing:border-box;border:1px solid #d6d3ce;background:#fefefe;"></div>
<div style="position:absolute;left:1294.5px;top:111.75px;width:0;height:0;border-left:3.5px solid transparent;border-right:3.5px solid transparent;border-bottom:3.5px solid #555555"></div>
<div style="position:absolute;left:1291px;top:549px;width:14px;height:9px;box-sizing:border-box;border:1px solid #cfccc7;background:#e4e2df;"></div>
<div style="position:absolute;left:1291px;top:557px;width:14px;height:13px;box-sizing:border-box;border:1px solid #d6d3ce;background:#fefefe;"></div>
<div style="position:absolute;left:1294.5px;top:561.75px;width:0;height:0;border-left:3.5px solid transparent;border-right:3.5px solid transparent;border-top:3.5px solid #555555"></div>
<div style="position:absolute;left:1291px;top:576px;width:14px;height:462px;box-sizing:border-box;border:1px solid #d6d3ce;background:linear-gradient(90deg,#f4f2ef,#fdfdfc);"></div>
<div style="position:absolute;left:1291px;top:576px;width:14px;height:13px;box-sizing:border-box;border:1px solid #d6d3ce;background:#fefefe;"></div>
<div style="position:absolute;left:1294.5px;top:580.75px;width:0;height:0;border-left:3.5px solid transparent;border-right:3.5px solid transparent;border-bottom:3.5px solid #555555"></div>
<div style="position:absolute;left:1291px;top:1017px;width:14px;height:9px;box-sizing:border-box;border:1px solid #cfccc7;background:#e4e2df;"></div>
<div style="position:absolute;left:1291px;top:1025px;width:14px;height:13px;box-sizing:border-box;border:1px solid #d6d3ce;background:#fefefe;"></div>
<div style="position:absolute;left:1294.5px;top:1029.75px;width:0;height:0;border-left:3.5px solid transparent;border-right:3.5px solid transparent;border-top:3.5px solid #555555"></div>
<div style="position:absolute;left:306px;top:570px;width:495px;height:6px;background:#ebe8e3;"></div>
<div style="position:absolute;left:807px;top:570px;width:498px;height:6px;background:#ebe8e3;"></div>
<div style="position:absolute;left:305px;top:106px;width:496px;height:1px;background:#d0cdc8;"></div>
<div style="position:absolute;left:305px;top:570px;width:496px;height:1px;background:#c8c5c0;"></div>
<div style="position:absolute;left:305px;top:575px;width:496px;height:1px;background:#c8c5c0;"></div>
<div style="position:absolute;left:305px;top:1038px;width:496px;height:1px;background:#c8c5c0;"></div>
<div style="position:absolute;left:806px;top:106px;width:499px;height:1px;background:#d0cdc8;"></div>
<div style="position:absolute;left:806px;top:570px;width:499px;height:1px;background:#c8c5c0;"></div>
<div style="position:absolute;left:806px;top:575px;width:499px;height:1px;background:#c8c5c0;"></div>
<div style="position:absolute;left:806px;top:1038px;width:499px;height:1px;background:#c8c5c0;"></div>
<div style="position:absolute;left:0px;top:28px;width:1px;height:1039px;background:#101c28;"></div>
<div style="position:absolute;left:1px;top:28px;width:1px;height:1032px;background:rgba(200,225,245,0.55);"></div>
<div style="position:absolute;left:1311px;top:28px;width:1px;height:1039px;background:#101c28;"></div>
<div style="position:absolute;left:1310px;top:28px;width:1px;height:1032px;background:rgba(200,225,245,0.45);"></div>
<div style="position:absolute;left:0px;top:1066px;width:1312px;height:1px;background:#101c28;"></div>
<div style="position:absolute;left:1px;top:1065px;width:1310px;height:1px;background:rgba(200,225,245,0.45);"></div>
<div style="position:absolute;left:547px;top:572px;width:1px;height:1px;background:#a8a5a0;"></div>
<div style="position:absolute;left:550px;top:572px;width:1px;height:1px;background:#a8a5a0;"></div>
<div style="position:absolute;left:553px;top:572px;width:1px;height:1px;background:#a8a5a0;"></div>
<div style="position:absolute;left:556px;top:572px;width:1px;height:1px;background:#a8a5a0;"></div>
<div style="position:absolute;left:559px;top:572px;width:1px;height:1px;background:#a8a5a0;"></div>
<div style="position:absolute;left:562px;top:572px;width:1px;height:1px;background:#a8a5a0;"></div>
<div style="position:absolute;left:1049px;top:572px;width:1px;height:1px;background:#a8a5a0;"></div>
<div style="position:absolute;left:1052px;top:572px;width:1px;height:1px;background:#a8a5a0;"></div>
<div style="position:absolute;left:1055px;top:572px;width:1px;height:1px;background:#a8a5a0;"></div>
<div style="position:absolute;left:1058px;top:572px;width:1px;height:1px;background:#a8a5a0;"></div>
<div style="position:absolute;left:1061px;top:572px;width:1px;height:1px;background:#a8a5a0;"></div>
<div style="position:absolute;left:1064px;top:572px;width:1px;height:1px;background:#a8a5a0;"></div>
<div style="position:absolute;left:803px;top:553px;width:1px;height:1px;background:#a8a5a0;"></div>
<div style="position:absolute;left:803px;top:556px;width:1px;height:1px;background:#a8a5a0;"></div>
<div style="position:absolute;left:803px;top:559px;width:1px;height:1px;background:#a8a5a0;"></div>
<div style="position:absolute;left:803px;top:562px;width:1px;height:1px;background:#a8a5a0;"></div>
<div style="position:absolute;left:803px;top:565px;width:1px;height:1px;background:#a8a5a0;"></div>
<div style="position:absolute;left:803px;top:568px;width:1px;height:1px;background:#a8a5a0;"></div>
<div style="position:absolute;left:798.7px;top:1049.0px;width:1px;height:1px;background:#b3b0ab;"></div>
<div style="position:absolute;left:795.8px;top:1051.8px;width:1px;height:1px;background:#b3b0ab;"></div>
<div style="position:absolute;left:798.7px;top:1051.8px;width:1px;height:1px;background:#b3b0ab;"></div>
<div style="position:absolute;left:792.9px;top:1054.6px;width:1px;height:1px;background:#b3b0ab;"></div>
<div style="position:absolute;left:795.8px;top:1054.6px;width:1px;height:1px;background:#b3b0ab;"></div>
<div style="position:absolute;left:798.7px;top:1054.6px;width:1px;height:1px;background:#b3b0ab;"></div>
<div style="position:absolute;left:790.0px;top:1057.4px;width:1px;height:1px;background:#b3b0ab;"></div>
<div style="position:absolute;left:792.9px;top:1057.4px;width:1px;height:1px;background:#b3b0ab;"></div>
<div style="position:absolute;left:795.8px;top:1057.4px;width:1px;height:1px;background:#b3b0ab;"></div>
<div style="position:absolute;left:798.7px;top:1057.4px;width:1px;height:1px;background:#b3b0ab;"></div>
<div style="position:absolute;left:1302.7px;top:1049.0px;width:1px;height:1px;background:#b3b0ab;"></div>
<div style="position:absolute;left:1299.8px;top:1051.8px;width:1px;height:1px;background:#b3b0ab;"></div>
<div style="position:absolute;left:1302.7px;top:1051.8px;width:1px;height:1px;background:#b3b0ab;"></div>
<div style="position:absolute;left:1296.9px;top:1054.6px;width:1px;height:1px;background:#b3b0ab;"></div>
<div style="position:absolute;left:1299.8px;top:1054.6px;width:1px;height:1px;background:#b3b0ab;"></div>
<div style="position:absolute;left:1302.7px;top:1054.6px;width:1px;height:1px;background:#b3b0ab;"></div>
<div style="position:absolute;left:1294.0px;top:1057.4px;width:1px;height:1px;background:#b3b0ab;"></div>
<div style="position:absolute;left:1296.9px;top:1057.4px;width:1px;height:1px;background:#b3b0ab;"></div>
<div style="position:absolute;left:1299.8px;top:1057.4px;width:1px;height:1px;background:#b3b0ab;"></div>
<div style="position:absolute;left:1302.7px;top:1057.4px;width:1px;height:1px;background:#b3b0ab;"></div>
<svg style="position:absolute;left:306px;top:107px" width="470" height="463" viewBox="306 107 470 463"><defs><filter id="ftlbl" x="-50%" y="-50%" width="200%" height="200%"><feGaussianBlur stdDeviation="25"/></filter><filter id="ftl" filterUnits="userSpaceOnUse" x="306" y="107" width="470" height="463" color-interpolation-filters="sRGB">
<feGaussianBlur in="SourceGraphic" stdDeviation="1.0" result="base"/>
<feTurbulence type="fractalNoise" baseFrequency="0.12 0.62" numOctaves="2" seed="3" result="n"/>
<feColorMatrix in="n" type="matrix" values="2.4 0 0 0 -0.7  2.4 0 0 0 -0.7  2.4 0 0 0 -0.7  0 0 0 0 1" result="nc"/>
<feComposite in="base" in2="nc" operator="arithmetic" k1="0.62" k2="0.69" k3="0.1" k4="-0.05"/>
</filter><linearGradient id="ftlgr" x1="0" y1="0" x2="0" y2="1"><stop offset="0" stop-color="rgb(80,80,80)"/><stop offset="0.25" stop-color="rgb(44,44,44)"/><stop offset="1" stop-color="rgb(38,38,38)"/></linearGradient><pattern id="ftlp" patternUnits="userSpaceOnUse" x="307.3" y="108.3" width="3.66" height="3.66"><rect x="0" y="0" width="1.05" height="1.05" fill="#8c8c18"/></pattern><clipPath id="ftlc"><polygon points="306.00,205.50 406.00,187.50 498.50,178.00 520.00,176.25 645.00,165.00 695.00,157.50 776.00,149.50 776,107 306,107"/><polygon points="306.00,380.00 356.00,366.00 406.00,360.00 498.50,352.50 520.00,350.00 645.00,337.50 776.00,323.75 776,570 306,570"/></clipPath></defs><g filter="url(#ftl)"><rect x="296" y="97" width="490" height="483" fill="rgb(43,43,43)"/><path d="M306.00 228.00C311.33 225.83 323.00 220.83 338.00 215.00C353.00 209.17 377.33 199.67 396.00 193.00C414.67 186.33 434.50 179.67 450.00 175.00C465.50 170.33 482.50 166.67 489.00 165.00" fill="none" stroke="rgb(72,72,72)" stroke-width="4"/><path d="M539.00 140.00C544.50 141.17 550.83 142.33 572.00 147.00C593.17 151.67 632.33 158.50 666.00 168.00C699.67 177.50 756.00 198.00 774.00 204.00" fill="none" stroke="rgb(72,72,72)" stroke-width="4"/><path d="M296.00 298.00C297.67 298.00 300.17 298.50 306.00 298.00C311.83 297.50 322.67 296.33 331.00 295.00C339.33 293.67 347.67 291.88 356.00 290.00C364.33 288.12 372.67 286.46 381.00 283.75C389.33 281.04 397.67 278.12 406.00 273.75C414.33 269.38 425.33 260.99 431.00 257.50C436.67 254.01 435.68 255.83 440.00 252.80C444.32 249.77 451.28 243.80 456.90 239.30C462.52 234.80 468.08 230.58 473.70 225.80C479.32 221.02 484.97 215.10 490.60 210.60C496.23 206.10 501.87 202.45 507.50 198.80C513.13 195.15 518.78 191.37 524.40 188.70C530.02 186.03 535.58 184.07 541.20 182.80C546.82 181.53 552.47 180.97 558.10 181.10C563.73 181.23 569.38 182.33 575.00 183.60C580.62 184.87 586.18 187.15 591.80 188.70C597.42 190.25 602.33 191.23 608.70 192.90C615.07 194.57 624.42 197.27 630.00 198.70C635.58 200.13 638.13 200.28 642.20 201.50C646.27 202.72 650.33 204.28 654.40 206.00C658.47 207.72 662.53 209.77 666.60 211.80C670.67 213.83 674.73 216.07 678.80 218.20C682.87 220.33 685.80 222.00 691.00 224.60C696.20 227.20 705.17 231.23 710.00 233.80C714.83 236.37 714.17 236.88 720.00 240.00C725.83 243.12 735.67 249.25 745.00 252.50C754.33 255.75 769.17 258.33 776.00 259.50C782.83 260.67 784.33 259.50 786.00 259.50L786 580L296 580z" fill="rgb(200,200,200)"/><path d="M296.00 320.00C297.67 320.00 300.17 321.25 306.00 320.00C311.83 318.75 322.67 315.21 331.00 312.50C339.33 309.79 347.67 306.67 356.00 303.75C364.33 300.83 372.67 298.12 381.00 295.00C389.33 291.88 397.67 289.38 406.00 285.00C414.33 280.62 425.33 272.72 431.00 268.75C436.67 264.78 435.68 264.84 440.00 261.20C444.32 257.56 451.28 251.40 456.90 246.90C462.52 242.40 468.08 238.57 473.70 234.20C479.32 229.83 484.97 225.47 490.60 220.70C496.23 215.93 501.87 209.95 507.50 205.60C513.13 201.25 518.78 197.57 524.40 194.60C530.02 191.63 535.87 189.48 541.20 187.80C546.53 186.12 550.77 184.35 556.40 184.50C562.03 184.65 569.10 187.30 575.00 188.70C580.90 190.10 586.18 191.63 591.80 192.90C597.42 194.17 602.33 194.12 608.70 196.30C615.07 198.48 624.42 203.97 630.00 206.00C635.58 208.03 638.13 207.43 642.20 208.50C646.27 209.57 650.33 210.83 654.40 212.40C658.47 213.97 662.53 215.87 666.60 217.90C670.67 219.93 674.73 222.47 678.80 224.60C682.87 226.73 685.80 228.15 691.00 230.70C696.20 233.25 703.08 236.68 710.00 239.90C716.92 243.12 725.83 246.86 732.50 250.00C739.17 253.14 742.75 255.62 750.00 258.75C757.25 261.88 770.00 267.08 776.00 268.75C782.00 270.42 784.33 268.75 786.00 268.75L786 580L296 580z" fill="rgb(175,175,175)"/><path d="M296.00 326.25C297.67 326.25 300.17 327.50 306.00 326.25C311.83 325.00 322.67 321.46 331.00 318.75C339.33 316.04 347.67 312.79 356.00 310.00C364.33 307.21 372.67 304.29 381.00 302.00C389.33 299.71 397.67 299.71 406.00 296.25C414.33 292.79 425.33 285.39 431.00 281.25C436.67 277.11 435.68 275.86 440.00 271.40C444.32 266.94 451.28 259.28 456.90 254.50C462.52 249.72 468.08 246.63 473.70 242.70C479.32 238.77 486.37 234.28 490.60 230.90C494.83 227.52 494.88 226.62 499.10 222.40C503.32 218.18 510.28 210.10 515.90 205.60C521.52 201.10 527.17 198.08 532.80 195.40C538.43 192.72 544.92 190.33 549.70 189.50C554.48 188.67 557.28 189.42 561.50 190.40C565.72 191.38 569.95 194.00 575.00 195.40C580.05 196.80 586.18 197.25 591.80 198.80C597.42 200.35 602.33 202.17 608.70 204.70C615.07 207.23 624.42 212.00 630.00 214.00C635.58 216.00 638.13 215.53 642.20 216.70C646.27 217.87 650.33 219.47 654.40 221.00C658.47 222.53 662.53 224.38 666.60 225.90C670.67 227.42 674.73 228.28 678.80 230.10C682.87 231.92 685.80 234.47 691.00 236.80C696.20 239.13 705.17 241.48 710.00 244.10C714.83 246.72 714.17 249.22 720.00 252.50C725.83 255.78 738.33 261.46 745.00 263.75C751.67 266.04 754.83 264.88 760.00 266.25C765.17 267.62 771.67 271.04 776.00 272.00C780.33 272.96 784.33 272.00 786.00 272.00L786 580L296 580z" fill="rgb(148,148,148)"/><path d="M296.00 332.50C297.67 332.50 300.17 333.54 306.00 332.50C311.83 331.46 322.67 328.54 331.00 326.25C339.33 323.96 347.67 320.62 356.00 318.75C364.33 316.88 372.67 317.71 381.00 315.00C389.33 312.29 397.67 306.88 406.00 302.50C414.33 298.12 425.33 291.13 431.00 288.75C436.67 286.37 435.68 291.09 440.00 288.20C444.32 285.31 451.28 276.18 456.90 271.40C462.52 266.62 468.08 265.13 473.70 259.50C479.32 253.87 484.97 244.07 490.60 237.60C496.23 231.13 501.87 226.32 507.50 220.70C513.13 215.08 518.78 208.25 524.40 203.90C530.02 199.55 536.70 196.15 541.20 194.60C545.70 193.05 547.18 193.62 551.40 194.60C555.62 195.58 561.17 197.55 566.50 200.50C571.83 203.45 577.77 209.63 583.40 212.30C589.03 214.97 594.67 214.82 600.30 216.50C605.93 218.18 612.25 220.13 617.20 222.40C622.15 224.67 626.85 228.30 630.00 230.10C633.15 231.90 633.05 232.38 636.10 233.20C639.15 234.02 644.23 233.58 648.30 235.00C652.37 236.42 656.43 239.77 660.50 241.70C664.57 243.63 668.13 245.38 672.70 246.60C677.27 247.82 675.85 244.47 687.90 249.00C699.95 253.53 730.32 268.92 745.00 273.75C759.68 278.58 769.17 277.29 776.00 278.00C782.83 278.71 784.33 278.00 786.00 278.00L786 580L296 580z" fill="rgb(108,108,108)"/><path d="M296.00 338.75C297.67 338.75 300.17 339.38 306.00 338.75C311.83 338.12 322.67 336.46 331.00 335.00C339.33 333.54 347.67 332.08 356.00 330.00C364.33 327.92 372.67 324.58 381.00 322.50C389.33 320.42 397.67 319.17 406.00 317.50C414.33 315.83 425.33 314.00 431.00 312.50C436.67 311.00 435.68 312.27 440.00 308.50C444.32 304.73 451.28 294.68 456.90 289.90C462.52 285.12 468.08 284.02 473.70 279.80C479.32 275.58 484.97 269.38 490.60 264.60C496.23 259.82 501.87 255.32 507.50 251.10C513.13 246.88 518.78 243.10 524.40 239.30C530.02 235.50 536.15 230.55 541.20 228.30C546.25 226.05 549.07 225.65 554.70 225.80C560.33 225.95 568.82 227.52 575.00 229.20C581.18 230.88 586.18 233.93 591.80 235.90C597.42 237.87 603.07 239.03 608.70 241.00C614.33 242.97 619.97 245.73 625.60 247.70C631.23 249.67 636.77 251.10 642.50 252.80C648.23 254.50 653.33 256.07 660.00 257.90C666.67 259.72 674.58 261.32 682.50 263.75C690.42 266.18 699.17 269.79 707.50 272.50C715.83 275.21 725.83 277.50 732.50 280.00C739.17 282.50 740.25 286.04 747.50 287.50C754.75 288.96 769.58 288.54 776.00 288.75C782.42 288.96 784.33 288.75 786.00 288.75L786 580L296 580z" fill="rgb(118,118,118)"/><path d="M296.00 348.75C297.67 348.75 300.17 349.38 306.00 348.75C311.83 348.12 322.67 346.46 331.00 345.00C339.33 343.54 347.67 341.46 356.00 340.00C364.33 338.54 372.67 337.71 381.00 336.25C389.33 334.79 397.67 332.92 406.00 331.25C414.33 329.58 425.33 327.51 431.00 326.25C436.67 324.99 435.68 326.66 440.00 323.70C444.32 320.74 451.28 313.57 456.90 308.50C462.52 303.43 468.08 297.80 473.70 293.30C479.32 288.80 484.97 286.00 490.60 281.50C496.23 277.00 501.87 271.08 507.50 266.30C513.13 261.52 518.78 255.90 524.40 252.80C530.02 249.70 536.15 249.25 541.20 247.70C546.25 246.15 550.75 243.22 554.70 243.50C558.65 243.78 561.52 247.00 564.90 249.40C568.28 251.80 570.52 257.62 575.00 257.90C579.48 258.18 586.18 251.82 591.80 251.10C597.42 250.38 603.07 251.63 608.70 253.60C614.33 255.57 617.05 260.92 625.60 262.90C634.15 264.88 651.77 264.11 660.00 265.50C668.23 266.89 669.17 269.25 675.00 271.25C680.83 273.25 688.33 275.21 695.00 277.50C701.67 279.79 706.67 282.08 715.00 285.00C723.33 287.92 734.83 293.12 745.00 295.00C755.17 296.88 769.17 296.04 776.00 296.25C782.83 296.46 784.33 296.25 786.00 296.25L786 580L296 580z" fill="rgb(64,64,64)"/><clipPath id="ftlsc"><path d="M296.00 338.50C297.67 338.50 300.17 339.54 306.00 338.50C311.83 337.46 322.67 334.54 331.00 332.25C339.33 329.96 347.67 326.62 356.00 324.75C364.33 322.88 372.67 323.71 381.00 321.00C389.33 318.29 397.67 312.88 406.00 308.50C414.33 304.12 425.33 297.13 431.00 294.75C436.67 292.37 435.68 297.09 440.00 294.20C444.32 291.31 451.28 282.18 456.90 277.40C462.52 272.62 468.08 271.13 473.70 265.50C479.32 259.87 484.97 250.07 490.60 243.60C496.23 237.13 501.87 232.32 507.50 226.70C513.13 221.08 518.78 214.25 524.40 209.90C530.02 205.55 536.70 202.15 541.20 200.60C545.70 199.05 547.18 199.62 551.40 200.60C555.62 201.58 561.17 203.55 566.50 206.50C571.83 209.45 577.77 215.63 583.40 218.30C589.03 220.97 594.67 220.82 600.30 222.50C605.93 224.18 612.25 226.13 617.20 228.40C622.15 230.67 626.85 234.30 630.00 236.10C633.15 237.90 633.05 238.38 636.10 239.20C639.15 240.02 644.23 239.58 648.30 241.00C652.37 242.42 656.43 245.77 660.50 247.70C664.57 249.63 668.13 251.38 672.70 252.60C677.27 253.82 675.85 250.47 687.90 255.00C699.95 259.52 730.32 274.92 745.00 279.75C759.68 284.58 769.17 283.29 776.00 284.00C782.83 284.71 784.33 284.00 786.00 284.00L786 570L296 570z"/></clipPath><g clip-path="url(#ftlsc)"><g opacity="1"><rect x="496.0" y="107" width="2.4" height="463" fill="rgb(30,30,30)" opacity="0.67"/><rect x="506.5" y="107" width="2.4" height="463" fill="rgb(30,30,30)" opacity="0.65"/><rect x="515.1" y="107" width="1.9" height="463" fill="rgb(30,30,30)" opacity="0.65"/><rect x="523.8" y="107" width="3.1" height="463" fill="rgb(30,30,30)" opacity="0.49"/><rect x="530.7" y="107" width="1.7" height="463" fill="rgb(30,30,30)" opacity="0.77"/><rect x="539.8" y="107" width="1.6" height="463" fill="rgb(30,30,30)" opacity="0.84"/><rect x="550.6" y="107" width="2.8" height="463" fill="rgb(30,30,30)" opacity="0.70"/><rect x="556.6" y="107" width="1.5" height="463" fill="rgb(30,30,30)" opacity="0.66"/><rect x="561.9" y="107" width="1.9" height="463" fill="rgb(30,30,30)" opacity="0.55"/><rect x="567.1" y="107" width="2.4" height="463" fill="rgb(30,30,30)" opacity="0.63"/><rect x="577.2" y="107" width="2.5" height="463" fill="rgb(30,30,30)" opacity="0.71"/><rect x="585.2" y="107" width="2.8" height="463" fill="rgb(30,30,30)" opacity="0.63"/><rect x="591.8" y="107" width="3.5" height="463" fill="rgb(30,30,30)" opacity="0.85"/><rect x="601.9" y="107" width="2.9" height="463" fill="rgb(30,30,30)" opacity="0.58"/><rect x="608.2" y="107" width="2.1" height="463" fill="rgb(30,30,30)" opacity="0.48"/><rect x="617.8" y="107" width="2.3" height="463" fill="rgb(30,30,30)" opacity="0.79"/><rect x="625.2" y="107" width="3.4" height="463" fill="rgb(30,30,30)" opacity="0.79"/><rect x="630.2" y="107" width="1.9" height="463" fill="rgb(30,30,30)" opacity="0.81"/><rect x="638.0" y="107" width="3.5" height="463" fill="rgb(30,30,30)" opacity="0.61"/><rect x="643.4" y="107" width="2.8" height="463" fill="rgb(30,30,30)" opacity="0.76"/><rect x="650.0" y="107" width="1.7" height="463" fill="rgb(30,30,30)" opacity="0.58"/><rect x="660.8" y="107" width="3.0" height="463" fill="rgb(30,30,30)" opacity="0.50"/><rect x="667.3" y="107" width="1.7" height="463" fill="rgb(30,30,30)" opacity="0.47"/><rect x="677.1" y="107" width="1.9" height="463" fill="rgb(30,30,30)" opacity="0.67"/><rect x="684.8" y="107" width="1.9" height="463" fill="rgb(30,30,30)" opacity="0.74"/><rect x="690.6" y="107" width="2.8" height="463" fill="rgb(30,30,30)" opacity="0.50"/><rect x="698.1" y="107" width="1.9" height="463" fill="rgb(30,30,30)" opacity="0.56"/><rect x="708.9" y="107" width="3.1" height="463" fill="rgb(30,30,30)" opacity="0.57"/><rect x="719.2" y="107" width="1.9" height="463" fill="rgb(30,30,30)" opacity="0.61"/><rect x="729.3" y="107" width="2.8" height="463" fill="rgb(30,30,30)" opacity="0.49"/><rect x="740.3" y="107" width="1.9" height="463" fill="rgb(30,30,30)" opacity="0.55"/><ellipse cx="599" cy="300" rx="150" ry="90" fill="rgb(60,60,60)" opacity="0.55" filter="url(#ftlbl)"/></g></g><path d="M296.00 363.00C297.67 363.00 288.67 364.00 306.00 363.00C323.33 362.00 368.00 359.17 400.00 357.00C432.00 354.83 478.00 351.83 498.00 350.00C518.00 348.17 495.50 348.83 520.00 346.00C544.50 343.17 602.33 338.17 645.00 333.00C687.67 327.83 752.50 318.00 776.00 315.00C799.50 312.00 784.33 315.00 786.00 315.00L786 580L296 580z" fill="rgb(172,172,172)"/><path d="M296.00 386.00C297.67 386.00 288.67 388.00 306.00 386.00C323.33 384.00 368.00 377.33 400.00 374.00C432.00 370.67 478.00 367.83 498.00 366.00C518.00 364.17 495.50 365.67 520.00 363.00C544.50 360.33 602.33 355.17 645.00 350.00C687.67 344.83 752.50 335.00 776.00 332.00C799.50 329.00 784.33 332.00 786.00 332.00L786 580L296 580z" fill="rgb(82,82,82)"/><rect x="296" y="385" width="490" height="195" fill="url(#ftlgr)"/></g><rect x="306" y="107" width="470" height="463" fill="url(#ftlp)" clip-path="url(#ftlc)"/><polyline points="306.00,205.50 406.00,187.50 498.50,178.00 520.00,176.25 645.00,165.00 695.00,157.50 776.00,149.50" fill="none" stroke="#8c8c10" stroke-width="1"/><polyline points="306.00,380.00 356.00,366.00 406.00,360.00 498.50,352.50 520.00,350.00 645.00,337.50 776.00,323.75" fill="none" stroke="#8c8c10" stroke-width="1"/><path d="M775.5 107V149.5M775.5 323.75V570M306 107.5H776M306.5 107V205.5M306.5 380V570" stroke="#8c8c10" stroke-width="1" fill="none"/><path d="M306.00 298.00C310.17 297.50 322.67 296.33 331.00 295.00C339.33 293.67 347.67 291.88 356.00 290.00C364.33 288.12 372.67 286.46 381.00 283.75C389.33 281.04 397.67 278.12 406.00 273.75C414.33 269.38 425.33 260.99 431.00 257.50C436.67 254.01 435.68 255.83 440.00 252.80C444.32 249.77 451.28 243.80 456.90 239.30C462.52 234.80 468.08 230.58 473.70 225.80C479.32 221.02 484.97 215.10 490.60 210.60C496.23 206.10 501.87 202.45 507.50 198.80C513.13 195.15 518.78 191.37 524.40 188.70C530.02 186.03 535.58 184.07 541.20 182.80C546.82 181.53 552.47 180.97 558.10 181.10C563.73 181.23 569.38 182.33 575.00 183.60C580.62 184.87 586.18 187.15 591.80 188.70C597.42 190.25 602.33 191.23 608.70 192.90C615.07 194.57 624.42 197.27 630.00 198.70C635.58 200.13 638.13 200.28 642.20 201.50C646.27 202.72 650.33 204.28 654.40 206.00C658.47 207.72 662.53 209.77 666.60 211.80C670.67 213.83 674.73 216.07 678.80 218.20C682.87 220.33 685.80 222.00 691.00 224.60C696.20 227.20 705.17 231.23 710.00 233.80C714.83 236.37 714.17 236.88 720.00 240.00C725.83 243.12 735.67 249.25 745.00 252.50C754.33 255.75 770.83 258.33 776.00 259.50" fill="none" stroke="#ff0000" stroke-width="2.2" stroke-linejoin="round"/><path d="M306.00 320.00C310.17 318.75 322.67 315.21 331.00 312.50C339.33 309.79 347.67 306.67 356.00 303.75C364.33 300.83 372.67 298.12 381.00 295.00C389.33 291.88 397.67 289.38 406.00 285.00C414.33 280.62 425.33 272.72 431.00 268.75C436.67 264.78 435.68 264.84 440.00 261.20C444.32 257.56 451.28 251.40 456.90 246.90C462.52 242.40 468.08 238.57 473.70 234.20C479.32 229.83 484.97 225.47 490.60 220.70C496.23 215.93 501.87 209.95 507.50 205.60C513.13 201.25 518.78 197.57 524.40 194.60C530.02 191.63 535.87 189.48 541.20 187.80C546.53 186.12 550.77 184.35 556.40 184.50C562.03 184.65 569.10 187.30 575.00 188.70C580.90 190.10 586.18 191.63 591.80 192.90C597.42 194.17 602.33 194.12 608.70 196.30C615.07 198.48 624.42 203.97 630.00 206.00C635.58 208.03 638.13 207.43 642.20 208.50C646.27 209.57 650.33 210.83 654.40 212.40C658.47 213.97 662.53 215.87 666.60 217.90C670.67 219.93 674.73 222.47 678.80 224.60C682.87 226.73 685.80 228.15 691.00 230.70C696.20 233.25 703.08 236.68 710.00 239.90C716.92 243.12 725.83 246.86 732.50 250.00C739.17 253.14 742.75 255.62 750.00 258.75C757.25 261.88 771.67 267.08 776.00 268.75" fill="none" stroke="#00ff00" stroke-width="2" stroke-linejoin="round"/><path d="M306.00 326.25C310.17 325.00 322.67 321.46 331.00 318.75C339.33 316.04 347.67 312.79 356.00 310.00C364.33 307.21 372.67 304.29 381.00 302.00C389.33 299.71 397.67 299.71 406.00 296.25C414.33 292.79 425.33 285.39 431.00 281.25C436.67 277.11 435.68 275.86 440.00 271.40C444.32 266.94 451.28 259.28 456.90 254.50C462.52 249.72 468.08 246.63 473.70 242.70C479.32 238.77 486.37 234.28 490.60 230.90C494.83 227.52 494.88 226.62 499.10 222.40C503.32 218.18 510.28 210.10 515.90 205.60C521.52 201.10 527.17 198.08 532.80 195.40C538.43 192.72 544.92 190.33 549.70 189.50C554.48 188.67 557.28 189.42 561.50 190.40C565.72 191.38 569.95 194.00 575.00 195.40C580.05 196.80 586.18 197.25 591.80 198.80C597.42 200.35 602.33 202.17 608.70 204.70C615.07 207.23 624.42 212.00 630.00 214.00C635.58 216.00 638.13 215.53 642.20 216.70C646.27 217.87 650.33 219.47 654.40 221.00C658.47 222.53 662.53 224.38 666.60 225.90C670.67 227.42 674.73 228.28 678.80 230.10C682.87 231.92 685.80 234.47 691.00 236.80C696.20 239.13 705.17 241.48 710.00 244.10C714.83 246.72 714.17 249.22 720.00 252.50C725.83 255.78 738.33 261.46 745.00 263.75C751.67 266.04 754.83 264.88 760.00 266.25C765.17 267.62 773.33 271.04 776.00 272.00" fill="none" stroke="#0000ff" stroke-width="3.0" stroke-linejoin="round"/><path d="M306.00 332.50C310.17 331.46 322.67 328.54 331.00 326.25C339.33 323.96 347.67 320.62 356.00 318.75C364.33 316.88 372.67 317.71 381.00 315.00C389.33 312.29 397.67 306.88 406.00 302.50C414.33 298.12 425.33 291.13 431.00 288.75C436.67 286.37 435.68 291.09 440.00 288.20C444.32 285.31 451.28 276.18 456.90 271.40C462.52 266.62 468.08 265.13 473.70 259.50C479.32 253.87 484.97 244.07 490.60 237.60C496.23 231.13 501.87 226.32 507.50 220.70C513.13 215.08 518.78 208.25 524.40 203.90C530.02 199.55 536.70 196.15 541.20 194.60C545.70 193.05 547.18 193.62 551.40 194.60C555.62 195.58 561.17 197.55 566.50 200.50C571.83 203.45 577.77 209.63 583.40 212.30C589.03 214.97 594.67 214.82 600.30 216.50C605.93 218.18 612.25 220.13 617.20 222.40C622.15 224.67 626.85 228.30 630.00 230.10C633.15 231.90 633.05 232.38 636.10 233.20C639.15 234.02 644.23 233.58 648.30 235.00C652.37 236.42 656.43 239.77 660.50 241.70C664.57 243.63 668.13 245.38 672.70 246.60C677.27 247.82 675.85 244.47 687.90 249.00C699.95 253.53 730.32 268.92 745.00 273.75C759.68 278.58 770.83 277.29 776.00 278.00" fill="none" stroke="#ffff00" stroke-width="2" stroke-linejoin="round"/><path d="M306.00 338.75C310.17 338.12 322.67 336.46 331.00 335.00C339.33 333.54 347.67 332.08 356.00 330.00C364.33 327.92 372.67 324.58 381.00 322.50C389.33 320.42 397.67 319.17 406.00 317.50C414.33 315.83 425.33 314.00 431.00 312.50C436.67 311.00 435.68 312.27 440.00 308.50C444.32 304.73 451.28 294.68 456.90 289.90C462.52 285.12 468.08 284.02 473.70 279.80C479.32 275.58 484.97 269.38 490.60 264.60C496.23 259.82 501.87 255.32 507.50 251.10C513.13 246.88 518.78 243.10 524.40 239.30C530.02 235.50 536.15 230.55 541.20 228.30C546.25 226.05 549.07 225.65 554.70 225.80C560.33 225.95 568.82 227.52 575.00 229.20C581.18 230.88 586.18 233.93 591.80 235.90C597.42 237.87 603.07 239.03 608.70 241.00C614.33 242.97 619.97 245.73 625.60 247.70C631.23 249.67 636.77 251.10 642.50 252.80C648.23 254.50 653.33 256.07 660.00 257.90C666.67 259.72 674.58 261.32 682.50 263.75C690.42 266.18 699.17 269.79 707.50 272.50C715.83 275.21 725.83 277.50 732.50 280.00C739.17 282.50 740.25 286.04 747.50 287.50C754.75 288.96 771.25 288.54 776.00 288.75" fill="none" stroke="#00ffff" stroke-width="2" stroke-linejoin="round"/><path d="M306.00 348.75C310.17 348.12 322.67 346.46 331.00 345.00C339.33 343.54 347.67 341.46 356.00 340.00C364.33 338.54 372.67 337.71 381.00 336.25C389.33 334.79 397.67 332.92 406.00 331.25C414.33 329.58 425.33 327.51 431.00 326.25C436.67 324.99 435.68 326.66 440.00 323.70C444.32 320.74 451.28 313.57 456.90 308.50C462.52 303.43 468.08 297.80 473.70 293.30C479.32 288.80 484.97 286.00 490.60 281.50C496.23 277.00 501.87 271.08 507.50 266.30C513.13 261.52 518.78 255.90 524.40 252.80C530.02 249.70 536.15 249.25 541.20 247.70C546.25 246.15 550.75 243.22 554.70 243.50C558.65 243.78 561.52 247.00 564.90 249.40C568.28 251.80 570.52 257.62 575.00 257.90C579.48 258.18 586.18 251.82 591.80 251.10C597.42 250.38 603.07 251.63 608.70 253.60C614.33 255.57 617.05 260.92 625.60 262.90C634.15 264.88 651.77 264.11 660.00 265.50C668.23 266.89 669.17 269.25 675.00 271.25C680.83 273.25 688.33 275.21 695.00 277.50C701.67 279.79 706.67 282.08 715.00 285.00C723.33 287.92 734.83 293.12 745.00 295.00C755.17 296.88 770.83 296.04 776.00 296.25" fill="none" stroke="#ff00ff" stroke-width="2" stroke-linejoin="round"/><rect x="498" y="107" width="2" height="463" fill="#2c8ed2"/><rect x="306" y="384" width="470" height="2" fill="#2c8ed2"/><g stroke="#2c8ed2" stroke-width="1" fill="none"><path d="M315.5 136V116.5H335"/><path d="M332 114l3 2.5-3 2.5M312.5 133l3 3 3-3"/></g>
<text x="337" y="121" font-family="Liberation Sans" font-size="8" fill="#2c8ed2">x</text><text x="313.5" y="145" font-family="Liberation Sans" font-size="8" fill="#2c8ed2">y</text></svg>
<svg style="position:absolute;left:807px;top:107px" width="471" height="463" viewBox="807 107 471 463"><defs><filter id="ftrbl" x="-50%" y="-50%" width="200%" height="200%"><feGaussianBlur stdDeviation="25"/></filter><filter id="ftr" filterUnits="userSpaceOnUse" x="807" y="107" width="471" height="463" color-interpolation-filters="sRGB">
<feGaussianBlur in="SourceGraphic" stdDeviation="1.0" result="base"/>
<feTurbulence type="fractalNoise" baseFrequency="0.07 0.45" numOctaves="2" seed="3" result="n"/>
<feColorMatrix in="n" type="matrix" values="2.4 0 0 0 -0.7  2.4 0 0 0 -0.7  2.4 0 0 0 -0.7  0 0 0 0 1" result="nc"/>
<feComposite in="base" in2="nc" operator="arithmetic" k1="0.62" k2="0.69" k3="0.1" k4="-0.05"/>
</filter><linearGradient id="ftrgr" x1="0" y1="0" x2="0" y2="1"><stop offset="0" stop-color="rgb(80,80,80)"/><stop offset="0.25" stop-color="rgb(44,44,44)"/><stop offset="1" stop-color="rgb(38,38,38)"/></linearGradient></defs><g filter="url(#ftr)"><rect x="797" y="97" width="491" height="483" fill="rgb(43,43,43)"/><path d="M807.00 228.00C812.33 225.83 824.00 220.83 839.00 215.00C854.00 209.17 878.33 199.67 897.00 193.00C915.67 186.33 935.50 179.67 951.00 175.00C966.50 170.33 983.50 166.67 990.00 165.00" fill="none" stroke="rgb(72,72,72)" stroke-width="4"/><path d="M1040.00 140.00C1045.50 141.17 1051.83 142.33 1073.00 147.00C1094.17 151.67 1133.33 158.50 1167.00 168.00C1200.67 177.50 1257.00 198.00 1275.00 204.00" fill="none" stroke="rgb(72,72,72)" stroke-width="4"/><path d="M797.00 297.50C798.67 297.50 798.83 298.12 807.00 297.50C815.17 296.88 833.67 296.04 846.00 293.75C858.33 291.46 872.00 286.43 881.00 283.75C890.00 281.07 894.02 280.11 900.00 277.70C905.98 275.29 911.42 272.25 916.90 269.30C922.38 266.35 929.05 262.33 932.90 260.00C936.75 257.67 936.00 258.18 940.00 255.30C944.00 252.42 951.28 247.05 956.90 242.70C962.52 238.35 968.08 233.85 973.70 229.20C979.32 224.55 984.97 219.30 990.60 214.80C996.23 210.30 1001.87 205.98 1007.50 202.20C1013.13 198.42 1018.78 195.05 1024.40 192.10C1030.02 189.15 1035.58 186.33 1041.20 184.50C1046.82 182.67 1052.47 181.25 1058.10 181.10C1063.73 180.95 1069.38 182.48 1075.00 183.60C1080.62 184.72 1086.18 186.38 1091.80 187.80C1097.42 189.22 1103.07 190.68 1108.70 192.10C1114.33 193.52 1119.97 194.77 1125.60 196.30C1131.23 197.83 1136.77 199.48 1142.50 201.30C1148.23 203.12 1151.00 203.25 1160.00 207.20C1169.00 211.15 1184.17 218.91 1196.50 225.00C1208.83 231.09 1220.42 238.12 1234.00 243.75C1247.58 249.38 1269.00 256.25 1278.00 258.75C1287.00 261.25 1286.33 258.75 1288.00 258.75L1288 580L797 580z" fill="rgb(200,200,200)"/><path d="M797.00 320.00C798.67 320.00 797.17 322.50 807.00 320.00C816.83 317.50 840.50 310.37 856.00 305.00C871.50 299.63 889.85 292.20 900.00 287.80C910.15 283.40 911.28 281.83 916.90 278.60C922.52 275.37 929.35 271.50 933.70 268.40C938.05 265.30 939.13 263.17 943.00 260.00C946.87 256.83 951.78 253.55 956.90 249.40C962.02 245.25 968.08 239.73 973.70 235.10C979.32 230.47 984.97 226.10 990.60 221.60C996.23 217.10 1001.87 212.32 1007.50 208.10C1013.13 203.88 1018.78 199.68 1024.40 196.30C1030.02 192.92 1035.58 189.77 1041.20 187.80C1046.82 185.83 1052.47 184.63 1058.10 184.50C1063.73 184.37 1069.38 185.88 1075.00 187.00C1080.62 188.12 1086.18 189.80 1091.80 191.20C1097.42 192.60 1103.07 194.00 1108.70 195.40C1114.33 196.80 1119.97 198.05 1125.60 199.60C1131.23 201.15 1136.77 202.72 1142.50 204.70C1148.23 206.68 1155.17 209.37 1160.00 211.50C1164.83 213.63 1163.33 213.17 1171.50 217.50C1179.67 221.83 1196.50 231.46 1209.00 237.50C1221.50 243.54 1235.00 249.58 1246.50 253.75C1258.00 257.92 1271.08 261.04 1278.00 262.50C1284.92 263.96 1286.33 262.50 1288.00 262.50L1288 580L797 580z" fill="rgb(175,175,175)"/><path d="M797.00 323.75C798.67 323.75 797.17 326.04 807.00 323.75C816.83 321.46 840.50 314.44 856.00 310.00C871.50 305.56 889.85 300.65 900.00 297.10C910.15 293.55 911.98 291.78 916.90 288.70C921.82 285.62 925.28 281.98 929.50 278.60C933.72 275.22 938.12 271.50 942.20 268.40C946.28 265.30 948.75 264.15 954.00 260.00C959.25 255.85 967.60 248.63 973.70 243.50C979.80 238.37 984.97 234.12 990.60 229.20C996.23 224.28 1001.87 218.37 1007.50 214.00C1013.13 209.63 1018.78 206.65 1024.40 203.00C1030.02 199.35 1036.15 194.77 1041.20 192.10C1046.25 189.43 1049.07 187.15 1054.70 187.00C1060.33 186.85 1068.82 189.52 1075.00 191.20C1081.18 192.88 1086.18 194.98 1091.80 197.10C1097.42 199.22 1103.07 201.65 1108.70 203.90C1114.33 206.15 1119.97 208.35 1125.60 210.60C1131.23 212.85 1136.77 214.87 1142.50 217.40C1148.23 219.93 1151.00 221.62 1160.00 225.80C1169.00 229.98 1184.17 237.22 1196.50 242.50C1208.83 247.78 1220.42 252.71 1234.00 257.50C1247.58 262.29 1269.00 268.96 1278.00 271.25C1287.00 273.54 1286.33 271.25 1288.00 271.25L1288 580L797 580z" fill="rgb(148,148,148)"/><path d="M797.00 333.75C798.67 333.75 797.17 336.04 807.00 333.75C816.83 331.46 840.50 324.43 856.00 320.00C871.50 315.57 889.85 310.60 900.00 307.20C910.15 303.80 911.28 302.55 916.90 299.60C922.52 296.65 928.08 292.58 933.70 289.50C939.32 286.42 945.67 284.47 950.60 281.10C955.53 277.73 959.37 272.82 963.30 269.30C967.23 265.78 969.65 264.72 974.20 260.00C978.75 255.28 985.05 247.55 990.60 241.00C996.15 234.45 1001.87 227.17 1007.50 220.70C1013.13 214.23 1019.33 206.70 1024.40 202.20C1029.47 197.70 1033.68 195.67 1037.90 193.70C1042.12 191.73 1046.33 190.40 1049.70 190.40C1053.07 190.40 1053.88 191.17 1058.10 193.70C1062.32 196.23 1069.38 202.22 1075.00 205.60C1080.62 208.98 1086.18 211.48 1091.80 214.00C1097.42 216.52 1103.07 218.17 1108.70 220.70C1114.33 223.23 1119.97 226.67 1125.60 229.20C1131.23 231.73 1136.77 233.52 1142.50 235.90C1148.23 238.28 1155.17 241.57 1160.00 243.50C1164.83 245.43 1163.33 244.33 1171.50 247.50C1179.67 250.67 1196.50 257.50 1209.00 262.50C1221.50 267.50 1235.00 274.17 1246.50 277.50C1258.00 280.83 1271.08 281.67 1278.00 282.50C1284.92 283.33 1286.33 282.50 1288.00 282.50L1288 580L797 580z" fill="rgb(108,108,108)"/><path d="M797.00 338.75C798.67 338.75 797.17 340.42 807.00 338.75C816.83 337.08 840.50 331.54 856.00 328.75C871.50 325.96 889.85 323.62 900.00 322.00C910.15 320.38 911.28 320.90 916.90 319.00C922.52 317.10 928.08 313.12 933.70 310.60C939.32 308.08 945.25 306.57 950.60 303.90C955.95 301.23 961.58 297.42 965.80 294.60C970.02 291.78 972.80 290.23 975.90 287.00C979.00 283.77 981.58 278.72 984.40 275.20C987.22 271.68 990.28 268.43 992.80 265.90C995.32 263.37 995.65 263.32 999.50 260.00C1003.35 256.68 1011.20 250.02 1015.90 246.00C1020.60 241.98 1023.48 238.42 1027.70 235.90C1031.92 233.38 1034.73 232.30 1041.20 230.90C1047.67 229.50 1059.75 225.53 1066.50 227.50C1073.25 229.47 1076.92 241.72 1081.70 242.70C1086.48 243.68 1091.53 233.27 1095.20 233.40C1098.87 233.53 1100.60 243.08 1103.70 243.50C1106.80 243.92 1108.75 234.63 1113.80 235.90C1118.85 237.17 1126.30 247.30 1134.00 251.10C1141.70 254.90 1152.92 257.43 1160.00 258.70C1167.08 259.97 1172.50 257.28 1176.50 258.75C1180.50 260.22 1176.50 264.38 1184.00 267.50C1191.50 270.62 1211.08 274.38 1221.50 277.50C1231.92 280.62 1237.08 284.38 1246.50 286.25C1255.92 288.12 1271.08 288.33 1278.00 288.75C1284.92 289.17 1286.33 288.75 1288.00 288.75L1288 580L797 580z" fill="rgb(118,118,118)"/><path d="M797.00 347.50C798.67 347.50 797.17 348.75 807.00 347.50C816.83 346.25 840.50 342.77 856.00 340.00C871.50 337.23 889.85 332.78 900.00 330.90C910.15 329.02 911.28 329.62 916.90 328.70C922.52 327.78 928.08 327.15 933.70 325.40C939.32 323.65 945.25 321.65 950.60 318.20C955.95 314.75 960.88 309.48 965.80 304.70C970.72 299.92 975.88 293.15 980.10 289.50C984.32 285.85 987.58 284.77 991.10 282.80C994.62 280.83 998.05 280.65 1001.20 277.70C1004.35 274.75 1007.27 268.97 1010.00 265.10C1012.73 261.23 1012.40 258.23 1017.60 254.50C1022.80 250.77 1033.05 245.65 1041.20 242.70C1049.35 239.75 1060.87 234.00 1066.50 236.80C1072.13 239.60 1072.75 255.43 1075.00 259.50C1077.25 263.57 1076.92 264.00 1080.00 261.20C1083.08 258.40 1089.55 245.23 1093.50 242.70C1097.45 240.17 1101.45 244.03 1103.70 246.00C1105.95 247.97 1104.48 253.50 1107.00 254.50C1109.52 255.50 1114.30 250.03 1118.80 252.00C1123.30 253.97 1130.05 265.18 1134.00 266.30C1137.95 267.42 1139.97 258.83 1142.50 258.70C1145.03 258.57 1146.28 265.22 1149.20 265.50C1152.12 265.78 1157.53 261.32 1160.00 260.40C1162.47 259.48 1162.50 259.86 1164.00 260.00C1165.50 260.14 1167.33 258.54 1169.00 261.25C1170.67 263.96 1171.08 274.38 1174.00 276.25C1176.92 278.12 1179.83 271.04 1186.50 272.50C1193.17 273.96 1204.00 281.67 1214.00 285.00C1224.00 288.33 1235.83 290.92 1246.50 292.50C1257.17 294.08 1271.08 294.17 1278.00 294.50C1284.92 294.83 1286.33 294.50 1288.00 294.50L1288 580L797 580z" fill="rgb(76,76,76)"/><clipPath id="ftrsc"><path d="M797.00 339.75C798.67 339.75 797.17 342.04 807.00 339.75C816.83 337.46 840.50 330.43 856.00 326.00C871.50 321.57 889.85 316.60 900.00 313.20C910.15 309.80 911.28 308.55 916.90 305.60C922.52 302.65 928.08 298.58 933.70 295.50C939.32 292.42 945.67 290.47 950.60 287.10C955.53 283.73 959.37 278.82 963.30 275.30C967.23 271.78 969.65 270.72 974.20 266.00C978.75 261.28 985.05 253.55 990.60 247.00C996.15 240.45 1001.87 233.17 1007.50 226.70C1013.13 220.23 1019.33 212.70 1024.40 208.20C1029.47 203.70 1033.68 201.67 1037.90 199.70C1042.12 197.73 1046.33 196.40 1049.70 196.40C1053.07 196.40 1053.88 197.17 1058.10 199.70C1062.32 202.23 1069.38 208.22 1075.00 211.60C1080.62 214.98 1086.18 217.48 1091.80 220.00C1097.42 222.52 1103.07 224.17 1108.70 226.70C1114.33 229.23 1119.97 232.67 1125.60 235.20C1131.23 237.73 1136.77 239.52 1142.50 241.90C1148.23 244.28 1155.17 247.57 1160.00 249.50C1164.83 251.43 1163.33 250.33 1171.50 253.50C1179.67 256.67 1196.50 263.50 1209.00 268.50C1221.50 273.50 1235.00 280.17 1246.50 283.50C1258.00 286.83 1271.08 287.67 1278.00 288.50C1284.92 289.33 1286.33 288.50 1288.00 288.50L1288 570L797 570z"/></clipPath><g clip-path="url(#ftrsc)"><g opacity="1"><rect x="997.0" y="107" width="2.4" height="463" fill="rgb(30,30,30)" opacity="0.71"/><rect x="1006.0" y="107" width="1.8" height="463" fill="rgb(30,30,30)" opacity="0.45"/><rect x="1013.2" y="107" width="2.0" height="463" fill="rgb(30,30,30)" opacity="0.77"/><rect x="1022.4" y="107" width="2.7" height="463" fill="rgb(30,30,30)" opacity="0.67"/><rect x="1031.4" y="107" width="1.8" height="463" fill="rgb(30,30,30)" opacity="0.63"/><rect x="1037.3" y="107" width="3.3" height="463" fill="rgb(30,30,30)" opacity="0.47"/><rect x="1047.2" y="107" width="1.6" height="463" fill="rgb(30,30,30)" opacity="0.72"/><rect x="1054.3" y="107" width="2.3" height="463" fill="rgb(30,30,30)" opacity="0.79"/><rect x="1059.4" y="107" width="1.6" height="463" fill="rgb(30,30,30)" opacity="0.82"/><rect x="1067.4" y="107" width="1.7" height="463" fill="rgb(30,30,30)" opacity="0.84"/><rect x="1078.1" y="107" width="1.7" height="463" fill="rgb(30,30,30)" opacity="0.62"/><rect x="1083.9" y="107" width="2.1" height="463" fill="rgb(30,30,30)" opacity="0.70"/><rect x="1089.9" y="107" width="2.9" height="463" fill="rgb(30,30,30)" opacity="0.47"/><rect x="1095.9" y="107" width="3.1" height="463" fill="rgb(30,30,30)" opacity="0.61"/><rect x="1103.4" y="107" width="2.7" height="463" fill="rgb(30,30,30)" opacity="0.64"/><rect x="1110.8" y="107" width="1.6" height="463" fill="rgb(30,30,30)" opacity="0.74"/><rect x="1121.6" y="107" width="3.5" height="463" fill="rgb(30,30,30)" opacity="0.72"/><rect x="1128.7" y="107" width="2.2" height="463" fill="rgb(30,30,30)" opacity="0.73"/><rect x="1137.7" y="107" width="1.7" height="463" fill="rgb(30,30,30)" opacity="0.54"/><rect x="1144.9" y="107" width="2.5" height="463" fill="rgb(30,30,30)" opacity="0.77"/><rect x="1152.9" y="107" width="1.6" height="463" fill="rgb(30,30,30)" opacity="0.78"/><rect x="1160.5" y="107" width="2.5" height="463" fill="rgb(30,30,30)" opacity="0.54"/><rect x="1168.1" y="107" width="2.3" height="463" fill="rgb(30,30,30)" opacity="0.76"/><rect x="1173.7" y="107" width="2.6" height="463" fill="rgb(30,30,30)" opacity="0.52"/><rect x="1182.9" y="107" width="1.6" height="463" fill="rgb(30,30,30)" opacity="0.56"/><rect x="1189.9" y="107" width="2.8" height="463" fill="rgb(30,30,30)" opacity="0.47"/><rect x="1197.7" y="107" width="1.9" height="463" fill="rgb(30,30,30)" opacity="0.56"/><rect x="1205.5" y="107" width="3.4" height="463" fill="rgb(30,30,30)" opacity="0.64"/><rect x="1216.3" y="107" width="1.8" height="463" fill="rgb(30,30,30)" opacity="0.82"/><rect x="1223.5" y="107" width="1.9" height="463" fill="rgb(30,30,30)" opacity="0.75"/><rect x="1233.9" y="107" width="1.5" height="463" fill="rgb(30,30,30)" opacity="0.56"/><rect x="1243.5" y="107" width="2.2" height="463" fill="rgb(30,30,30)" opacity="0.55"/><ellipse cx="1100" cy="300" rx="150" ry="90" fill="rgb(60,60,60)" opacity="0.55" filter="url(#ftrbl)"/></g></g><path d="M797.00 371.25C798.67 371.25 797.17 373.54 807.00 371.25C816.83 368.96 837.40 361.04 856.00 357.50C874.60 353.96 901.43 352.05 918.60 350.00C935.77 347.95 948.03 346.35 959.00 345.20C969.97 344.05 975.90 343.95 984.40 343.10C992.90 342.25 1003.33 342.22 1010.00 340.10C1016.67 337.98 1019.20 333.42 1024.40 330.40C1029.60 327.38 1035.58 324.25 1041.20 322.00C1046.82 319.75 1052.47 317.33 1058.10 316.90C1063.73 316.47 1070.22 317.85 1075.00 319.40C1079.78 320.95 1083.15 324.37 1086.80 326.20C1090.45 328.03 1090.43 329.83 1096.90 330.40C1103.37 330.97 1115.08 330.17 1125.60 329.60C1136.12 329.03 1150.27 328.18 1160.00 327.00C1169.73 325.82 1171.67 324.29 1184.00 322.50C1196.33 320.71 1218.33 317.50 1234.00 316.25C1249.67 315.00 1269.00 315.21 1278.00 315.00C1287.00 314.79 1286.33 315.00 1288.00 315.00L1288 580L797 580z" fill="rgb(140,140,140)"/><path d="M797.00 384.75C798.67 384.75 797.17 386.83 807.00 384.75C816.83 382.67 839.50 375.58 856.00 372.25C872.50 368.92 889.33 366.62 906.00 364.75C922.67 362.88 939.33 362.04 956.00 361.00C972.67 359.96 988.83 359.54 1006.00 358.50C1023.17 357.46 1037.67 357.04 1059.00 354.75C1080.33 352.46 1109.00 348.08 1134.00 344.75C1159.00 341.42 1185.00 337.25 1209.00 334.75C1233.00 332.25 1264.83 330.58 1278.00 329.75C1291.17 328.92 1286.33 329.75 1288.00 329.75L1288 580L797 580z" fill="rgb(175,175,175)"/><path d="M797.00 393.75C798.67 393.75 797.17 395.83 807.00 393.75C816.83 391.67 839.50 384.58 856.00 381.25C872.50 377.92 889.33 375.62 906.00 373.75C922.67 371.88 939.33 371.04 956.00 370.00C972.67 368.96 988.83 368.54 1006.00 367.50C1023.17 366.46 1037.67 366.04 1059.00 363.75C1080.33 361.46 1109.00 357.08 1134.00 353.75C1159.00 350.42 1185.00 346.25 1209.00 343.75C1233.00 341.25 1264.83 339.58 1278.00 338.75C1291.17 337.92 1286.33 338.75 1288.00 338.75L1288 580L797 580z" fill="rgb(105,105,105)"/><rect x="797" y="385" width="491" height="195" fill="url(#ftrgr)"/></g><path d="M807.00 297.50C813.50 296.88 833.67 296.04 846.00 293.75C858.33 291.46 872.00 286.43 881.00 283.75C890.00 281.07 894.02 280.11 900.00 277.70C905.98 275.29 911.42 272.25 916.90 269.30C922.38 266.35 929.05 262.33 932.90 260.00C936.75 257.67 936.00 258.18 940.00 255.30C944.00 252.42 951.28 247.05 956.90 242.70C962.52 238.35 968.08 233.85 973.70 229.20C979.32 224.55 984.97 219.30 990.60 214.80C996.23 210.30 1001.87 205.98 1007.50 202.20C1013.13 198.42 1018.78 195.05 1024.40 192.10C1030.02 189.15 1035.58 186.33 1041.20 184.50C1046.82 182.67 1052.47 181.25 1058.10 181.10C1063.73 180.95 1069.38 182.48 1075.00 183.60C1080.62 184.72 1086.18 186.38 1091.80 187.80C1097.42 189.22 1103.07 190.68 1108.70 192.10C1114.33 193.52 1119.97 194.77 1125.60 196.30C1131.23 197.83 1136.77 199.48 1142.50 201.30C1148.23 203.12 1151.00 203.25 1160.00 207.20C1169.00 211.15 1184.17 218.91 1196.50 225.00C1208.83 231.09 1220.42 238.12 1234.00 243.75C1247.58 249.38 1270.67 256.25 1278.00 258.75" fill="none" stroke="#ff0000" stroke-width="2" stroke-linejoin="round"/><path d="M807.00 320.00C815.17 317.50 840.50 310.37 856.00 305.00C871.50 299.63 889.85 292.20 900.00 287.80C910.15 283.40 911.28 281.83 916.90 278.60C922.52 275.37 929.35 271.50 933.70 268.40C938.05 265.30 939.13 263.17 943.00 260.00C946.87 256.83 951.78 253.55 956.90 249.40C962.02 245.25 968.08 239.73 973.70 235.10C979.32 230.47 984.97 226.10 990.60 221.60C996.23 217.10 1001.87 212.32 1007.50 208.10C1013.13 203.88 1018.78 199.68 1024.40 196.30C1030.02 192.92 1035.58 189.77 1041.20 187.80C1046.82 185.83 1052.47 184.63 1058.10 184.50C1063.73 184.37 1069.38 185.88 1075.00 187.00C1080.62 188.12 1086.18 189.80 1091.80 191.20C1097.42 192.60 1103.07 194.00 1108.70 195.40C1114.33 196.80 1119.97 198.05 1125.60 199.60C1131.23 201.15 1136.77 202.72 1142.50 204.70C1148.23 206.68 1155.17 209.37 1160.00 211.50C1164.83 213.63 1163.33 213.17 1171.50 217.50C1179.67 221.83 1196.50 231.46 1209.00 237.50C1221.50 243.54 1235.00 249.58 1246.50 253.75C1258.00 257.92 1272.75 261.04 1278.00 262.50" fill="none" stroke="#00ff00" stroke-width="1.8" stroke-linejoin="round"/><path d="M807.00 323.75C815.17 321.46 840.50 314.44 856.00 310.00C871.50 305.56 889.85 300.65 900.00 297.10C910.15 293.55 911.98 291.78 916.90 288.70C921.82 285.62 925.28 281.98 929.50 278.60C933.72 275.22 938.12 271.50 942.20 268.40C946.28 265.30 948.75 264.15 954.00 260.00C959.25 255.85 967.60 248.63 973.70 243.50C979.80 238.37 984.97 234.12 990.60 229.20C996.23 224.28 1001.87 218.37 1007.50 214.00C1013.13 209.63 1018.78 206.65 1024.40 203.00C1030.02 199.35 1036.15 194.77 1041.20 192.10C1046.25 189.43 1049.07 187.15 1054.70 187.00C1060.33 186.85 1068.82 189.52 1075.00 191.20C1081.18 192.88 1086.18 194.98 1091.80 197.10C1097.42 199.22 1103.07 201.65 1108.70 203.90C1114.33 206.15 1119.97 208.35 1125.60 210.60C1131.23 212.85 1136.77 214.87 1142.50 217.40C1148.23 219.93 1151.00 221.62 1160.00 225.80C1169.00 229.98 1184.17 237.22 1196.50 242.50C1208.83 247.78 1220.42 252.71 1234.00 257.50C1247.58 262.29 1270.67 268.96 1278.00 271.25" fill="none" stroke="#0000ff" stroke-width="1.8" stroke-linejoin="round"/><path d="M807.00 333.75C815.17 331.46 840.50 324.43 856.00 320.00C871.50 315.57 889.85 310.60 900.00 307.20C910.15 303.80 911.28 302.55 916.90 299.60C922.52 296.65 928.08 292.58 933.70 289.50C939.32 286.42 945.67 284.47 950.60 281.10C955.53 277.73 959.37 272.82 963.30 269.30C967.23 265.78 969.65 264.72 974.20 260.00C978.75 255.28 985.05 247.55 990.60 241.00C996.15 234.45 1001.87 227.17 1007.50 220.70C1013.13 214.23 1019.33 206.70 1024.40 202.20C1029.47 197.70 1033.68 195.67 1037.90 193.70C1042.12 191.73 1046.33 190.40 1049.70 190.40C1053.07 190.40 1053.88 191.17 1058.10 193.70C1062.32 196.23 1069.38 202.22 1075.00 205.60C1080.62 208.98 1086.18 211.48 1091.80 214.00C1097.42 216.52 1103.07 218.17 1108.70 220.70C1114.33 223.23 1119.97 226.67 1125.60 229.20C1131.23 231.73 1136.77 233.52 1142.50 235.90C1148.23 238.28 1155.17 241.57 1160.00 243.50C1164.83 245.43 1163.33 244.33 1171.50 247.50C1179.67 250.67 1196.50 257.50 1209.00 262.50C1221.50 267.50 1235.00 274.17 1246.50 277.50C1258.00 280.83 1272.75 281.67 1278.00 282.50" fill="none" stroke="#ffff00" stroke-width="1.8" stroke-linejoin="round"/><path d="M807.00 338.75C815.17 337.08 840.50 331.54 856.00 328.75C871.50 325.96 889.85 323.62 900.00 322.00C910.15 320.38 911.28 320.90 916.90 319.00C922.52 317.10 928.08 313.12 933.70 310.60C939.32 308.08 945.25 306.57 950.60 303.90C955.95 301.23 961.58 297.42 965.80 294.60C970.02 291.78 972.80 290.23 975.90 287.00C979.00 283.77 981.58 278.72 984.40 275.20C987.22 271.68 990.28 268.43 992.80 265.90C995.32 263.37 995.65 263.32 999.50 260.00C1003.35 256.68 1011.20 250.02 1015.90 246.00C1020.60 241.98 1023.48 238.42 1027.70 235.90C1031.92 233.38 1034.73 232.30 1041.20 230.90C1047.67 229.50 1059.75 225.53 1066.50 227.50C1073.25 229.47 1076.92 241.72 1081.70 242.70C1086.48 243.68 1091.53 233.27 1095.20 233.40C1098.87 233.53 1100.60 243.08 1103.70 243.50C1106.80 243.92 1108.75 234.63 1113.80 235.90C1118.85 237.17 1126.30 247.30 1134.00 251.10C1141.70 254.90 1152.92 257.43 1160.00 258.70C1167.08 259.97 1172.50 257.28 1176.50 258.75C1180.50 260.22 1176.50 264.38 1184.00 267.50C1191.50 270.62 1211.08 274.38 1221.50 277.50C1231.92 280.62 1237.08 284.38 1246.50 286.25C1255.92 288.12 1272.75 288.33 1278.00 288.75" fill="none" stroke="#00ffff" stroke-width="1.8" stroke-linejoin="round"/><path d="M807.00 347.50C815.17 346.25 840.50 342.77 856.00 340.00C871.50 337.23 889.85 332.78 900.00 330.90C910.15 329.02 911.28 329.62 916.90 328.70C922.52 327.78 928.08 327.15 933.70 325.40C939.32 323.65 945.25 321.65 950.60 318.20C955.95 314.75 960.88 309.48 965.80 304.70C970.72 299.92 975.88 293.15 980.10 289.50C984.32 285.85 987.58 284.77 991.10 282.80C994.62 280.83 998.05 280.65 1001.20 277.70C1004.35 274.75 1007.27 268.97 1010.00 265.10C1012.73 261.23 1012.40 258.23 1017.60 254.50C1022.80 250.77 1033.05 245.65 1041.20 242.70C1049.35 239.75 1060.87 234.00 1066.50 236.80C1072.13 239.60 1072.75 255.43 1075.00 259.50C1077.25 263.57 1076.92 264.00 1080.00 261.20C1083.08 258.40 1089.55 245.23 1093.50 242.70C1097.45 240.17 1101.45 244.03 1103.70 246.00C1105.95 247.97 1104.48 253.50 1107.00 254.50C1109.52 255.50 1114.30 250.03 1118.80 252.00C1123.30 253.97 1130.05 265.18 1134.00 266.30C1137.95 267.42 1139.97 258.83 1142.50 258.70C1145.03 258.57 1146.28 265.22 1149.20 265.50C1152.12 265.78 1157.53 261.32 1160.00 260.40C1162.47 259.48 1162.50 259.86 1164.00 260.00C1165.50 260.14 1167.33 258.54 1169.00 261.25C1170.67 263.96 1171.08 274.38 1174.00 276.25C1176.92 278.12 1179.83 271.04 1186.50 272.50C1193.17 273.96 1204.00 281.67 1214.00 285.00C1224.00 288.33 1235.83 290.92 1246.50 292.50C1257.17 294.08 1272.75 294.17 1278.00 294.50" fill="none" stroke="#ff00ff" stroke-width="1.8" stroke-linejoin="round"/><path d="M807.00 371.25C815.17 368.96 837.40 361.04 856.00 357.50C874.60 353.96 901.43 352.05 918.60 350.00C935.77 347.95 948.03 346.35 959.00 345.20C969.97 344.05 975.90 343.95 984.40 343.10C992.90 342.25 1003.33 342.22 1010.00 340.10C1016.67 337.98 1019.20 333.42 1024.40 330.40C1029.60 327.38 1035.58 324.25 1041.20 322.00C1046.82 319.75 1052.47 317.33 1058.10 316.90C1063.73 316.47 1070.22 317.85 1075.00 319.40C1079.78 320.95 1083.15 324.37 1086.80 326.20C1090.45 328.03 1090.43 329.83 1096.90 330.40C1103.37 330.97 1115.08 330.17 1125.60 329.60C1136.12 329.03 1150.27 328.18 1160.00 327.00C1169.73 325.82 1171.67 324.29 1184.00 322.50C1196.33 320.71 1218.33 317.50 1234.00 316.25C1249.67 315.00 1270.67 315.21 1278.00 315.00" fill="none" stroke="#ff0000" stroke-width="2" stroke-linejoin="round"/><path d="M807.00 375.00C815.17 372.71 839.50 364.79 856.00 361.25C872.50 357.71 889.33 356.04 906.00 353.75C922.67 351.46 938.00 349.38 956.00 347.50C974.00 345.62 1003.73 343.75 1014.00 342.50C1024.27 341.25 1014.47 342.30 1017.60 340.00C1020.73 337.70 1027.45 331.70 1032.80 328.70C1038.15 325.70 1044.08 323.40 1049.70 322.00C1055.32 320.60 1060.88 319.88 1066.50 320.30C1072.12 320.72 1078.33 322.25 1083.40 324.50C1088.47 326.75 1089.87 332.40 1096.90 333.80C1103.93 335.20 1115.08 333.75 1125.60 332.90C1136.12 332.05 1150.27 330.02 1160.00 328.70C1169.73 327.38 1171.67 326.66 1184.00 325.00C1196.33 323.34 1218.33 320.08 1234.00 318.75C1249.67 317.42 1270.67 317.29 1278.00 317.00" fill="none" stroke="#00ff00" stroke-width="1.8" stroke-linejoin="round"/><path d="M807.00 378.75C815.17 376.46 839.50 368.54 856.00 365.00C872.50 361.46 889.33 359.79 906.00 357.50C922.67 355.21 939.33 352.71 956.00 351.25C972.67 349.79 988.83 350.00 1006.00 348.75C1023.17 347.50 1037.67 345.83 1059.00 343.75C1080.33 341.67 1109.00 338.96 1134.00 336.25C1159.00 333.54 1185.00 330.00 1209.00 327.50C1233.00 325.00 1266.50 322.29 1278.00 321.25" fill="none" stroke="#0000ff" stroke-width="1.8" stroke-linejoin="round"/><path d="M807.00 381.25C815.17 378.96 839.50 371.04 856.00 367.50C872.50 363.96 889.33 362.08 906.00 360.00C922.67 357.92 939.33 356.46 956.00 355.00C972.67 353.54 988.83 352.29 1006.00 351.25C1023.17 350.21 1037.67 350.62 1059.00 348.75C1080.33 346.88 1109.00 343.12 1134.00 340.00C1159.00 336.88 1185.00 332.50 1209.00 330.00C1233.00 327.50 1266.50 325.83 1278.00 325.00" fill="none" stroke="#ffff00" stroke-width="1.8" stroke-linejoin="round"/><path d="M807.00 383.75C815.17 381.67 839.50 374.58 856.00 371.25C872.50 367.92 889.33 365.62 906.00 363.75C922.67 361.88 939.33 361.04 956.00 360.00C972.67 358.96 988.83 358.54 1006.00 357.50C1023.17 356.46 1037.67 356.04 1059.00 353.75C1080.33 351.46 1109.00 347.08 1134.00 343.75C1159.00 340.42 1185.00 336.25 1209.00 333.75C1233.00 331.25 1266.50 329.58 1278.00 328.75" fill="none" stroke="#00ffff" stroke-width="1.8" stroke-linejoin="round"/><rect x="999" y="107" width="2" height="463" fill="#2c8ed2"/><rect x="807" y="384" width="471" height="2" fill="#2c8ed2"/><g stroke="#2c8ed2" stroke-width="1" fill="none"><path d="M816.5 136V116.5H836"/><path d="M833 114l3 2.5-3 2.5M813.5 133l3 3 3-3"/></g>
<text x="838" y="121" font-family="Liberation Sans" font-size="8" fill="#2c8ed2">x</text><text x="814.5" y="145" font-family="Liberation Sans" font-size="8" fill="#2c8ed2">y</text></svg>
<svg style="position:absolute;left:306px;top:576px" width="184" height="462" viewBox="306 576 184 462"><defs><filter id="fbl" filterUnits="userSpaceOnUse" x="306" y="576" width="184" height="462" color-interpolation-filters="sRGB">
<feGaussianBlur in="SourceGraphic" stdDeviation="1.0" result="base"/>
<feTurbulence type="fractalNoise" baseFrequency="0.42 0.32" numOctaves="2" seed="7" result="n"/>
<feColorMatrix in="n" type="matrix" values="2.4 0 0 0 -0.7  2.4 0 0 0 -0.7  2.4 0 0 0 -0.7  0 0 0 0 1" result="nc"/>
<feComposite in="base" in2="nc" operator="arithmetic" k1="0.62" k2="0.69" k3="0.1" k4="-0.05"/>
</filter><linearGradient id="fblgr" x1="0" y1="0" x2="0" y2="1"><stop offset="0" stop-color="rgb(70,70,70)"/><stop offset="0.3" stop-color="rgb(38,38,38)"/><stop offset="1" stop-color="rgb(33,33,33)"/></linearGradient><pattern id="fblp" patternUnits="userSpaceOnUse" x="307.3" y="577.3" width="3.66" height="3.66"><rect x="0" y="0" width="1.05" height="1.05" fill="#8c8c18"/></pattern><clipPath id="fblc"><polygon points="306.30,664.50 333.40,659.50 366.80,657.80 391.80,653.60 404.70,647.80 425.20,637.80 445.20,624.40 467.00,611.00 490.00,599.40 490,576 306,576"/><polygon points="306.30,838.50 333.40,833.50 366.80,831.00 391.80,826.80 404.70,821.80 425.20,811.80 450.30,795.10 490.00,774.20 490,1038 306,1038"/></clipPath></defs><g filter="url(#fbl)"><rect x="296" y="566" width="204" height="482" fill="rgb(40,40,40)"/><path d="M307.00 650.00C308.33 648.83 310.67 646.50 315.00 643.00C319.33 639.50 327.17 630.50 333.00 629.00C338.83 627.50 343.00 632.50 350.00 634.00C357.00 635.50 366.17 638.83 375.00 638.00C383.83 637.17 398.33 630.50 403.00 629.00" fill="none" stroke="rgb(80,80,80)" stroke-width="3.5"/><path d="M430.00 646.00C436.17 650.50 457.00 666.67 467.00 673.00C477.00 679.33 486.17 682.17 490.00 684.00" fill="none" stroke="rgb(80,80,80)" stroke-width="3.5"/><path d="M296.00 765.00C297.72 765.00 301.47 765.68 306.30 765.00C311.13 764.32 321.05 762.13 325.00 760.90C328.95 759.67 327.13 759.17 330.00 757.60C332.87 756.03 338.13 754.97 342.20 751.50C346.27 748.03 350.33 741.88 354.40 736.80C358.47 731.72 362.53 727.30 366.60 721.00C370.67 714.70 375.15 705.92 378.80 699.00C382.45 692.08 385.65 683.77 388.50 679.50C391.35 675.23 393.05 674.22 395.90 673.40C398.75 672.58 402.35 672.17 405.60 674.60C408.85 677.03 411.73 682.72 415.40 688.00C419.07 693.28 423.53 701.42 427.60 706.30C431.67 711.18 435.73 714.85 439.80 717.30C443.87 719.75 447.95 721.00 452.00 721.00C456.05 721.00 460.05 718.73 464.10 717.30C468.15 715.87 471.98 714.23 476.30 712.40C480.62 710.57 486.05 707.32 490.00 706.30C493.95 705.28 498.33 706.30 500.00 706.30L500 1048L296 1048z" fill="rgb(200,200,200)"/><path d="M296.00 779.20C297.72 779.20 301.47 780.30 306.30 779.20C311.13 778.10 321.05 773.97 325.00 772.60C328.95 771.23 327.13 773.10 330.00 771.00C332.87 768.90 338.13 764.27 342.20 760.00C346.27 755.73 350.33 750.48 354.40 745.40C358.47 740.32 362.53 735.20 366.60 729.50C370.67 723.80 375.15 717.90 378.80 711.20C382.45 704.50 385.65 693.67 388.50 689.30C391.35 684.93 392.65 685.62 395.90 685.00C399.15 684.38 404.75 683.67 408.00 685.60C411.25 687.53 412.13 692.13 415.40 696.60C418.67 701.07 423.53 707.12 427.60 712.40C431.67 717.68 435.73 725.03 439.80 728.30C443.87 731.57 447.95 731.60 452.00 732.00C456.05 732.40 460.05 731.72 464.10 730.70C468.15 729.68 472.43 727.72 476.30 725.90C480.17 724.08 485.02 721.23 487.30 719.80C489.58 718.37 487.88 717.72 490.00 717.30C492.12 716.88 498.33 717.30 500.00 717.30L500 1048L296 1048z" fill="rgb(170,170,170)"/><path d="M296.00 784.30C297.72 784.30 301.47 785.28 306.30 784.30C311.13 783.32 321.05 779.40 325.00 778.40C328.95 777.40 327.13 780.15 330.00 778.30C332.87 776.45 338.13 771.57 342.20 767.30C346.27 763.03 350.33 757.58 354.40 752.70C358.47 747.82 362.53 743.70 366.60 738.00C370.67 732.30 375.15 726.02 378.80 718.50C382.45 710.98 385.25 697.87 388.50 692.90C391.75 687.93 394.83 688.90 398.30 688.70C401.77 688.50 406.05 687.75 409.30 691.70C412.55 695.65 414.75 706.50 417.80 712.40C420.85 718.30 423.93 722.62 427.60 727.10C431.27 731.58 435.73 737.48 439.80 739.30C443.87 741.12 447.95 738.22 452.00 738.00C456.05 737.78 460.05 739.00 464.10 738.00C468.15 737.00 472.83 733.62 476.30 732.00C479.77 730.38 482.62 730.33 484.90 728.30C487.18 726.27 487.48 721.22 490.00 719.80C492.52 718.38 498.33 719.80 500.00 719.80L500 1048L296 1048z" fill="rgb(145,145,145)"/><path d="M296.00 793.40C297.72 793.40 301.47 794.50 306.30 793.40C311.13 792.30 321.05 788.30 325.00 786.80C328.95 785.30 327.13 786.02 330.00 784.40C332.87 782.78 338.13 779.95 342.20 777.10C346.27 774.25 350.33 770.97 354.40 767.30C358.47 763.63 362.53 761.40 366.60 755.10C370.67 748.80 375.15 738.03 378.80 729.50C382.45 720.97 385.25 709.38 388.50 703.90C391.75 698.42 395.45 696.60 398.30 696.60C401.15 696.60 402.75 701.27 405.60 703.90C408.45 706.53 411.73 707.12 415.40 712.40C419.07 717.68 423.95 729.30 427.60 735.60C431.25 741.90 433.23 748.17 437.30 750.20C441.37 752.23 447.53 748.60 452.00 747.80C456.47 747.00 460.05 746.82 464.10 745.40C468.15 743.98 471.98 742.55 476.30 739.30C480.62 736.05 486.05 728.13 490.00 725.90C493.95 723.67 498.33 725.90 500.00 725.90L500 1048L296 1048z" fill="rgb(120,120,120)"/><path d="M296.00 799.30C297.72 799.30 301.47 800.13 306.30 799.30C311.13 798.47 319.65 795.55 325.00 794.30C330.35 793.05 335.53 792.52 338.40 791.80C341.27 791.08 340.55 791.85 342.20 790.00C343.85 788.15 345.05 781.03 348.30 780.70C351.55 780.37 357.63 791.65 361.70 788.00C365.77 784.35 369.45 764.88 372.70 758.80C375.95 752.72 378.15 757.20 381.20 751.50C384.25 745.80 388.15 730.10 391.00 724.60C393.85 719.10 396.27 718.70 398.30 718.50C400.33 718.30 400.35 720.15 403.20 723.40C406.05 726.65 412.15 731.50 415.40 738.00C418.65 744.50 419.65 758.33 422.70 762.40C425.75 766.47 428.82 763.42 433.70 762.40C438.58 761.38 445.92 758.33 452.00 756.30C458.08 754.27 463.87 753.03 470.20 750.20C476.53 747.37 485.03 741.12 490.00 739.30C494.97 737.48 498.33 739.30 500.00 739.30L500 1048L296 1048z" fill="rgb(110,110,110)"/><path d="M296.00 811.00C297.72 811.00 301.47 811.98 306.30 811.00C311.13 810.02 319.10 806.92 325.00 805.10C330.90 803.28 335.85 800.65 341.70 800.10C347.55 799.55 356.15 803.48 360.10 801.80C364.05 800.12 362.28 796.15 365.40 790.00C368.52 783.85 374.53 772.33 378.80 764.90C383.07 757.47 387.75 749.47 391.00 745.40C394.25 741.33 395.87 741.32 398.30 740.50C400.73 739.68 402.75 738.27 405.60 740.50C408.45 742.73 412.75 748.00 415.40 753.90C418.05 759.80 418.45 773.05 421.50 775.90C424.55 778.75 429.63 772.02 433.70 771.00C437.77 769.98 442.85 770.82 445.90 769.80C448.95 768.78 448.97 766.73 452.00 764.90C455.03 763.07 460.05 761.25 464.10 758.80C468.15 756.35 471.98 752.23 476.30 750.20C480.62 748.17 486.05 747.20 490.00 746.60C493.95 746.00 498.33 746.60 500.00 746.60L500 1048L296 1048z" fill="rgb(76,76,76)"/><polygon points="373.00,780.00 387.00,750.00 397.00,742.00 404.00,742.00 413.00,753.00 420.00,775.00 419.00,806.00 405.00,819.00 390.00,822.00 375.00,812.00" fill="rgb(62,62,62)"/><path d="M296.00 826.00C297.67 826.00 297.33 826.50 306.00 826.00C314.67 825.50 334.83 823.67 348.00 823.00C361.17 822.33 375.50 822.67 385.00 822.00C394.50 821.33 399.33 821.67 405.00 819.00C410.67 816.33 412.00 811.00 419.00 806.00C426.00 801.00 435.17 795.83 447.00 789.00C458.83 782.17 481.17 769.00 490.00 765.00C498.83 761.00 498.33 765.00 500.00 765.00L500 1048L296 1048z" fill="rgb(180,180,180)"/><path d="M296.00 847.00C297.67 847.00 295.00 848.33 306.00 847.00C317.00 845.67 345.50 841.83 362.00 839.00C378.50 836.17 390.83 835.50 405.00 830.00C419.17 824.50 432.83 813.33 447.00 806.00C461.17 798.67 481.17 789.33 490.00 786.00C498.83 782.67 498.33 786.00 500.00 786.00L500 1048L296 1048z" fill="rgb(92,92,92)"/><rect x="296" y="854" width="204" height="194" fill="url(#fblgr)"/></g><rect x="306" y="576" width="184" height="462" fill="url(#fblp)" clip-path="url(#fblc)"/><polyline points="306.30,664.50 333.40,659.50 366.80,657.80 391.80,653.60 404.70,647.80 425.20,637.80 445.20,624.40 467.00,611.00 490.00,599.40" fill="none" stroke="#8c8c10" stroke-width="1"/><polyline points="306.30,838.50 333.40,833.50 366.80,831.00 391.80,826.80 404.70,821.80 425.20,811.80 450.30,795.10 490.00,774.20" fill="none" stroke="#8c8c10" stroke-width="1"/><path d="M489.5 576V599.4M489.5 774.2V1038M306 576.5H490M306.5 576V664.5M306.5 838.5V1038" stroke="#8c8c10" stroke-width="1" fill="none"/><path d="M306.30 765.00C309.42 764.32 321.05 762.13 325.00 760.90C328.95 759.67 327.13 759.17 330.00 757.60C332.87 756.03 338.13 754.97 342.20 751.50C346.27 748.03 350.33 741.88 354.40 736.80C358.47 731.72 362.53 727.30 366.60 721.00C370.67 714.70 375.15 705.92 378.80 699.00C382.45 692.08 385.65 683.77 388.50 679.50C391.35 675.23 393.05 674.22 395.90 673.40C398.75 672.58 402.35 672.17 405.60 674.60C408.85 677.03 411.73 682.72 415.40 688.00C419.07 693.28 423.53 701.42 427.60 706.30C431.67 711.18 435.73 714.85 439.80 717.30C443.87 719.75 447.95 721.00 452.00 721.00C456.05 721.00 460.05 718.73 464.10 717.30C468.15 715.87 471.98 714.23 476.30 712.40C480.62 710.57 487.72 707.32 490.00 706.30" fill="none" stroke="#ff0000" stroke-width="2.4" stroke-linejoin="round"/><path d="M306.30 779.20C309.42 778.10 321.05 773.97 325.00 772.60C328.95 771.23 327.13 773.10 330.00 771.00C332.87 768.90 338.13 764.27 342.20 760.00C346.27 755.73 350.33 750.48 354.40 745.40C358.47 740.32 362.53 735.20 366.60 729.50C370.67 723.80 375.15 717.90 378.80 711.20C382.45 704.50 385.65 693.67 388.50 689.30C391.35 684.93 392.65 685.62 395.90 685.00C399.15 684.38 404.75 683.67 408.00 685.60C411.25 687.53 412.13 692.13 415.40 696.60C418.67 701.07 423.53 707.12 427.60 712.40C431.67 717.68 435.73 725.03 439.80 728.30C443.87 731.57 447.95 731.60 452.00 732.00C456.05 732.40 460.05 731.72 464.10 730.70C468.15 729.68 472.43 727.72 476.30 725.90C480.17 724.08 485.02 721.23 487.30 719.80C489.58 718.37 489.55 717.72 490.00 717.30" fill="none" stroke="#00ff00" stroke-width="2.4" stroke-linejoin="round"/><path d="M306.30 784.30C309.42 783.32 321.05 779.40 325.00 778.40C328.95 777.40 327.13 780.15 330.00 778.30C332.87 776.45 338.13 771.57 342.20 767.30C346.27 763.03 350.33 757.58 354.40 752.70C358.47 747.82 362.53 743.70 366.60 738.00C370.67 732.30 375.15 726.02 378.80 718.50C382.45 710.98 385.25 697.87 388.50 692.90C391.75 687.93 394.83 688.90 398.30 688.70C401.77 688.50 406.05 687.75 409.30 691.70C412.55 695.65 414.75 706.50 417.80 712.40C420.85 718.30 423.93 722.62 427.60 727.10C431.27 731.58 435.73 737.48 439.80 739.30C443.87 741.12 447.95 738.22 452.00 738.00C456.05 737.78 460.05 739.00 464.10 738.00C468.15 737.00 472.83 733.62 476.30 732.00C479.77 730.38 482.62 730.33 484.90 728.30C487.18 726.27 489.15 721.22 490.00 719.80" fill="none" stroke="#0000ff" stroke-width="3.0" stroke-linejoin="round"/><path d="M306.30 793.40C309.42 792.30 321.05 788.30 325.00 786.80C328.95 785.30 327.13 786.02 330.00 784.40C332.87 782.78 338.13 779.95 342.20 777.10C346.27 774.25 350.33 770.97 354.40 767.30C358.47 763.63 362.53 761.40 366.60 755.10C370.67 748.80 375.15 738.03 378.80 729.50C382.45 720.97 385.25 709.38 388.50 703.90C391.75 698.42 395.45 696.60 398.30 696.60C401.15 696.60 402.75 701.27 405.60 703.90C408.45 706.53 411.73 707.12 415.40 712.40C419.07 717.68 423.95 729.30 427.60 735.60C431.25 741.90 433.23 748.17 437.30 750.20C441.37 752.23 447.53 748.60 452.00 747.80C456.47 747.00 460.05 746.82 464.10 745.40C468.15 743.98 471.98 742.55 476.30 739.30C480.62 736.05 487.72 728.13 490.00 725.90" fill="none" stroke="#ffff00" stroke-width="2" stroke-linejoin="round"/><path d="M306.30 799.30C309.42 798.47 319.65 795.55 325.00 794.30C330.35 793.05 335.53 792.52 338.40 791.80C341.27 791.08 340.55 791.85 342.20 790.00C343.85 788.15 345.05 781.03 348.30 780.70C351.55 780.37 357.63 791.65 361.70 788.00C365.77 784.35 369.45 764.88 372.70 758.80C375.95 752.72 378.15 757.20 381.20 751.50C384.25 745.80 388.15 730.10 391.00 724.60C393.85 719.10 396.27 718.70 398.30 718.50C400.33 718.30 400.35 720.15 403.20 723.40C406.05 726.65 412.15 731.50 415.40 738.00C418.65 744.50 419.65 758.33 422.70 762.40C425.75 766.47 428.82 763.42 433.70 762.40C438.58 761.38 445.92 758.33 452.00 756.30C458.08 754.27 463.87 753.03 470.20 750.20C476.53 747.37 486.70 741.12 490.00 739.30" fill="none" stroke="#00ffff" stroke-width="2" stroke-linejoin="round"/><path d="M306.30 811.00C309.42 810.02 319.10 806.92 325.00 805.10C330.90 803.28 335.85 800.65 341.70 800.10C347.55 799.55 356.15 803.48 360.10 801.80C364.05 800.12 362.28 796.15 365.40 790.00C368.52 783.85 374.53 772.33 378.80 764.90C383.07 757.47 387.75 749.47 391.00 745.40C394.25 741.33 395.87 741.32 398.30 740.50C400.73 739.68 402.75 738.27 405.60 740.50C408.45 742.73 412.75 748.00 415.40 753.90C418.05 759.80 418.45 773.05 421.50 775.90C424.55 778.75 429.63 772.02 433.70 771.00C437.77 769.98 442.85 770.82 445.90 769.80C448.95 768.78 448.97 766.73 452.00 764.90C455.03 763.07 460.05 761.25 464.10 758.80C468.15 756.35 471.98 752.23 476.30 750.20C480.62 748.17 487.72 747.20 490.00 746.60" fill="none" stroke="#ff00ff" stroke-width="2" stroke-linejoin="round"/><rect x="404" y="576" width="2" height="462" fill="#2c8ed2"/><rect x="306" y="853" width="184" height="2" fill="#2c8ed2"/><g stroke="#2c8ed2" stroke-width="1" fill="none"><path d="M315.5 605V585.5H335"/><path d="M332 583l3 2.5-3 2.5M312.5 602l3 3 3-3"/></g>
<text x="337" y="590" font-family="Liberation Sans" font-size="8" fill="#2c8ed2">z</text><text x="313.5" y="614" font-family="Liberation Sans" font-size="8" fill="#2c8ed2">y</text></svg>
<svg style="position:absolute;left:807px;top:576px" width="184" height="462" viewBox="807 576 184 462"><defs><filter id="fbr" filterUnits="userSpaceOnUse" x="807" y="576" width="184" height="462" color-interpolation-filters="sRGB">
<feGaussianBlur in="SourceGraphic" stdDeviation="1.0" result="base"/>
<feTurbulence type="fractalNoise" baseFrequency="0.42 0.32" numOctaves="2" seed="7" result="n"/>
<feColorMatrix in="n" type="matrix" values="2.4 0 0 0 -0.7  2.4 0 0 0 -0.7  2.4 0 0 0 -0.7  0 0 0 0 1" result="nc"/>
<feComposite in="base" in2="nc" operator="arithmetic" k1="0.62" k2="0.69" k3="0.1" k4="-0.05"/>
</filter><linearGradient id="fbrgr" x1="0" y1="0" x2="0" y2="1"><stop offset="0" stop-color="rgb(75,75,75)"/><stop offset="0.3" stop-color="rgb(42,42,42)"/><stop offset="1" stop-color="rgb(37,37,37)"/></linearGradient></defs><g filter="url(#fbr)"><rect x="797" y="566" width="204" height="482" fill="rgb(40,40,40)"/><path d="M808.00 650.00C809.33 648.83 811.67 646.50 816.00 643.00C820.33 639.50 828.17 630.50 834.00 629.00C839.83 627.50 844.00 632.50 851.00 634.00C858.00 635.50 867.17 638.83 876.00 638.00C884.83 637.17 899.33 630.50 904.00 629.00" fill="none" stroke="rgb(80,80,80)" stroke-width="3.5"/><path d="M931.00 646.00C937.17 650.50 958.00 666.67 968.00 673.00C978.00 679.33 987.17 682.17 991.00 684.00" fill="none" stroke="rgb(80,80,80)" stroke-width="3.5"/><path d="M797.00 763.40C798.72 763.40 802.47 763.97 807.30 763.40C812.13 762.83 822.05 760.97 826.00 760.00C829.95 759.03 828.13 759.02 831.00 757.60C833.87 756.18 838.12 755.37 843.20 751.50C848.28 747.63 856.42 740.30 861.50 734.40C866.58 728.50 869.63 723.42 873.70 716.10C877.77 708.78 882.25 697.20 885.90 690.50C889.55 683.80 893.17 678.13 895.60 675.90C898.03 673.67 899.07 677.32 900.50 677.10C901.93 676.88 901.55 672.98 904.20 674.60C906.85 676.22 912.33 681.52 916.40 686.80C920.47 692.08 924.53 701.22 928.60 706.30C932.67 711.38 936.73 714.85 940.80 717.30C944.87 719.75 948.95 721.20 953.00 721.00C957.05 720.80 961.05 717.53 965.10 716.10C969.15 714.67 972.98 714.03 977.30 712.40C981.62 710.77 987.05 707.32 991.00 706.30C994.95 705.28 999.33 706.30 1001.00 706.30L1001 1048L797 1048z" fill="rgb(200,200,200)"/><path d="M797.00 778.40C798.72 778.40 802.47 779.52 807.30 778.40C812.13 777.28 822.05 773.13 826.00 771.70C829.95 770.27 827.73 772.15 831.00 769.80C834.27 767.45 840.52 761.27 845.60 757.60C850.68 753.93 856.82 752.68 861.50 747.80C866.18 742.92 869.63 736.43 873.70 728.30C877.77 720.17 882.03 707.13 885.90 699.00C889.77 690.87 893.85 682.75 896.90 679.50C899.95 676.25 900.95 677.47 904.20 679.50C907.45 681.53 912.33 686.22 916.40 691.70C920.47 697.18 924.53 706.30 928.60 712.40C932.67 718.50 936.73 725.03 940.80 728.30C944.87 731.57 948.95 731.60 953.00 732.00C957.05 732.40 961.05 731.72 965.10 730.70C969.15 729.68 972.98 727.12 977.30 725.90C981.62 724.68 987.05 723.82 991.00 723.40C994.95 722.98 999.33 723.40 1001.00 723.40L1001 1048L797 1048z" fill="rgb(170,170,170)"/><path d="M797.00 782.60C798.72 782.60 802.47 783.58 807.30 782.60C812.13 781.62 822.05 778.03 826.00 776.70C829.95 775.37 827.52 777.58 831.00 774.60C834.48 771.62 843.23 761.23 846.90 758.80C850.57 756.37 849.97 761.83 853.00 760.00C856.03 758.17 861.05 753.48 865.10 747.80C869.15 742.12 873.43 734.85 877.30 725.90C881.17 716.95 884.83 701.22 888.30 694.10C891.77 686.98 895.05 684.52 898.10 683.20C901.15 681.88 903.55 682.75 906.60 686.20C909.65 689.65 912.73 696.88 916.40 703.90C920.07 710.92 924.53 723.02 928.60 728.30C932.67 733.58 935.73 734.38 940.80 735.60C945.87 736.82 953.93 736.00 959.00 735.60C964.07 735.20 965.87 734.82 971.20 733.20C976.53 731.58 986.03 727.12 991.00 725.90C995.97 724.68 999.33 725.90 1001.00 725.90L1001 1048L797 1048z" fill="rgb(145,145,145)"/><path d="M797.00 790.10C798.72 790.10 802.47 790.93 807.30 790.10C812.13 789.27 822.05 786.45 826.00 785.10C829.95 783.75 827.12 784.97 831.00 782.00C834.88 779.03 844.22 770.35 849.30 767.30C854.38 764.25 857.43 767.77 861.50 763.70C865.57 759.63 869.63 751.85 873.70 742.90C877.77 733.95 882.45 717.12 885.90 710.00C889.35 702.88 891.97 702.63 894.40 700.20C896.83 697.77 898.47 695.18 900.50 695.40C902.53 695.62 903.95 697.85 906.60 701.50C909.25 705.15 913.15 711.00 916.40 717.30C919.65 723.60 922.03 734.42 926.10 739.30C930.17 744.18 937.33 744.98 940.80 746.60C944.27 748.22 942.85 749.20 946.90 749.00C950.95 748.80 960.03 747.23 965.10 745.40C970.17 743.57 972.98 739.83 977.30 738.00C981.62 736.17 987.05 735.00 991.00 734.40C994.95 733.80 999.33 734.40 1001.00 734.40L1001 1048L797 1048z" fill="rgb(120,120,120)"/><path d="M797.00 798.40C798.72 798.40 802.47 799.08 807.30 798.40C812.13 797.72 820.42 795.70 826.00 794.30C831.58 792.90 835.30 791.25 840.80 790.00C846.30 788.75 854.53 788.95 859.00 786.80C863.47 784.65 864.13 782.38 867.60 777.10C871.07 771.82 876.55 761.40 879.80 755.10C883.05 748.80 885.07 745.40 887.10 739.30C889.13 733.20 890.37 720.33 892.00 718.50C893.63 716.67 895.28 727.48 896.90 728.30C898.52 729.12 900.08 723.40 901.70 723.40C903.32 723.40 904.57 725.87 906.60 728.30C908.63 730.73 911.47 732.72 913.90 738.00C916.33 743.28 918.75 756.95 921.20 760.00C923.65 763.05 925.33 756.50 928.60 756.30C931.87 756.10 936.73 759.00 940.80 758.80C944.87 758.60 947.93 756.93 953.00 755.10C958.07 753.27 964.87 750.43 971.20 747.80C977.53 745.17 986.03 740.72 991.00 739.30C995.97 737.88 999.33 739.30 1001.00 739.30L1001 1048L797 1048z" fill="rgb(110,110,110)"/><path d="M797.00 807.60C798.72 807.60 802.47 808.28 807.30 807.60C812.13 806.92 819.27 805.58 826.00 803.50C832.73 801.42 841.30 797.05 847.70 795.10C854.10 793.15 861.28 792.65 864.40 791.80C867.52 790.95 863.83 794.08 866.40 790.00C868.97 785.92 876.15 773.52 879.80 767.30C883.45 761.08 885.67 757.98 888.30 752.70C890.93 747.42 893.37 737.83 895.60 735.60C897.83 733.37 899.87 737.67 901.70 739.30C903.53 740.93 904.15 742.97 906.60 745.40C909.05 747.83 913.75 749.23 916.40 753.90C919.05 758.57 920.47 770.75 922.50 773.40C924.53 776.05 924.53 770.82 928.60 769.80C932.67 768.78 940.82 769.33 946.90 767.30C952.98 765.27 957.75 761.05 965.10 757.60C972.45 754.15 985.02 748.43 991.00 746.60C996.98 744.77 999.33 746.60 1001.00 746.60L1001 1048L797 1048z" fill="rgb(76,76,76)"/><polygon points="881.00,760.00 896.00,737.00 904.00,738.00 914.00,753.00 923.00,773.00 930.00,800.00 905.00,808.00 890.00,815.00 878.00,800.00" fill="rgb(52,52,52)"/><path d="M797.00 830.20C798.72 830.20 801.07 831.32 807.30 830.20C813.53 829.08 824.32 824.90 834.40 823.50C844.48 822.10 858.90 822.92 867.80 821.80C876.70 820.68 882.80 819.02 887.80 816.80C892.80 814.58 895.02 809.88 897.80 808.50C900.58 807.12 901.15 809.07 904.50 808.50C907.85 807.93 911.50 807.88 917.90 805.10C924.30 802.32 934.55 796.53 942.90 791.80C951.25 787.07 959.98 781.15 968.00 776.70C976.02 772.25 985.50 767.03 991.00 765.10C996.50 763.17 999.33 765.10 1001.00 765.10L1001 1048L797 1048z" fill="rgb(150,150,150)"/><path d="M797.00 844.50C798.72 844.50 801.07 845.47 807.30 844.50C813.53 843.53 824.32 839.95 834.40 838.70C844.48 837.45 856.67 838.82 867.80 837.00C878.93 835.18 888.68 832.67 901.20 827.80C913.72 822.93 931.77 813.63 942.90 807.80C954.03 801.97 959.98 797.53 968.00 792.80C976.02 788.07 985.50 781.63 991.00 779.40C996.50 777.17 999.33 779.40 1001.00 779.40L1001 1048L797 1048z" fill="rgb(135,135,135)"/><path d="M797.00 852.50C798.72 852.50 801.07 853.47 807.30 852.50C813.53 851.53 824.32 847.95 834.40 846.70C844.48 845.45 856.67 846.82 867.80 845.00C878.93 843.18 888.68 840.67 901.20 835.80C913.72 830.93 931.77 821.63 942.90 815.80C954.03 809.97 959.98 805.53 968.00 800.80C976.02 796.07 985.50 789.63 991.00 787.40C996.50 785.17 999.33 787.40 1001.00 787.40L1001 1048L797 1048z" fill="rgb(88,88,88)"/><rect x="797" y="854" width="204" height="194" fill="url(#fbrgr)"/></g><path d="M807.30 763.40C810.42 762.83 822.05 760.97 826.00 760.00C829.95 759.03 828.13 759.02 831.00 757.60C833.87 756.18 838.12 755.37 843.20 751.50C848.28 747.63 856.42 740.30 861.50 734.40C866.58 728.50 869.63 723.42 873.70 716.10C877.77 708.78 882.25 697.20 885.90 690.50C889.55 683.80 893.17 678.13 895.60 675.90C898.03 673.67 899.07 677.32 900.50 677.10C901.93 676.88 901.55 672.98 904.20 674.60C906.85 676.22 912.33 681.52 916.40 686.80C920.47 692.08 924.53 701.22 928.60 706.30C932.67 711.38 936.73 714.85 940.80 717.30C944.87 719.75 948.95 721.20 953.00 721.00C957.05 720.80 961.05 717.53 965.10 716.10C969.15 714.67 972.98 714.03 977.30 712.40C981.62 710.77 988.72 707.32 991.00 706.30" fill="none" stroke="#ff0000" stroke-width="2" stroke-linejoin="round"/><path d="M807.30 778.40C810.42 777.28 822.05 773.13 826.00 771.70C829.95 770.27 827.73 772.15 831.00 769.80C834.27 767.45 840.52 761.27 845.60 757.60C850.68 753.93 856.82 752.68 861.50 747.80C866.18 742.92 869.63 736.43 873.70 728.30C877.77 720.17 882.03 707.13 885.90 699.00C889.77 690.87 893.85 682.75 896.90 679.50C899.95 676.25 900.95 677.47 904.20 679.50C907.45 681.53 912.33 686.22 916.40 691.70C920.47 697.18 924.53 706.30 928.60 712.40C932.67 718.50 936.73 725.03 940.80 728.30C944.87 731.57 948.95 731.60 953.00 732.00C957.05 732.40 961.05 731.72 965.10 730.70C969.15 729.68 972.98 727.12 977.30 725.90C981.62 724.68 988.72 723.82 991.00 723.40" fill="none" stroke="#00ff00" stroke-width="2" stroke-linejoin="round"/><path d="M807.30 782.60C810.42 781.62 822.05 778.03 826.00 776.70C829.95 775.37 827.52 777.58 831.00 774.60C834.48 771.62 843.23 761.23 846.90 758.80C850.57 756.37 849.97 761.83 853.00 760.00C856.03 758.17 861.05 753.48 865.10 747.80C869.15 742.12 873.43 734.85 877.30 725.90C881.17 716.95 884.83 701.22 888.30 694.10C891.77 686.98 895.05 684.52 898.10 683.20C901.15 681.88 903.55 682.75 906.60 686.20C909.65 689.65 912.73 696.88 916.40 703.90C920.07 710.92 924.53 723.02 928.60 728.30C932.67 733.58 935.73 734.38 940.80 735.60C945.87 736.82 953.93 736.00 959.00 735.60C964.07 735.20 965.87 734.82 971.20 733.20C976.53 731.58 987.70 727.12 991.00 725.90" fill="none" stroke="#0000ff" stroke-width="2" stroke-linejoin="round"/><path d="M807.30 790.10C810.42 789.27 822.05 786.45 826.00 785.10C829.95 783.75 827.12 784.97 831.00 782.00C834.88 779.03 844.22 770.35 849.30 767.30C854.38 764.25 857.43 767.77 861.50 763.70C865.57 759.63 869.63 751.85 873.70 742.90C877.77 733.95 882.45 717.12 885.90 710.00C889.35 702.88 891.97 702.63 894.40 700.20C896.83 697.77 898.47 695.18 900.50 695.40C902.53 695.62 903.95 697.85 906.60 701.50C909.25 705.15 913.15 711.00 916.40 717.30C919.65 723.60 922.03 734.42 926.10 739.30C930.17 744.18 937.33 744.98 940.80 746.60C944.27 748.22 942.85 749.20 946.90 749.00C950.95 748.80 960.03 747.23 965.10 745.40C970.17 743.57 972.98 739.83 977.30 738.00C981.62 736.17 988.72 735.00 991.00 734.40" fill="none" stroke="#ffff00" stroke-width="2" stroke-linejoin="round"/><path d="M807.30 798.40C810.42 797.72 820.42 795.70 826.00 794.30C831.58 792.90 835.30 791.25 840.80 790.00C846.30 788.75 854.53 788.95 859.00 786.80C863.47 784.65 864.13 782.38 867.60 777.10C871.07 771.82 876.55 761.40 879.80 755.10C883.05 748.80 885.07 745.40 887.10 739.30C889.13 733.20 890.37 720.33 892.00 718.50C893.63 716.67 895.28 727.48 896.90 728.30C898.52 729.12 900.08 723.40 901.70 723.40C903.32 723.40 904.57 725.87 906.60 728.30C908.63 730.73 911.47 732.72 913.90 738.00C916.33 743.28 918.75 756.95 921.20 760.00C923.65 763.05 925.33 756.50 928.60 756.30C931.87 756.10 936.73 759.00 940.80 758.80C944.87 758.60 947.93 756.93 953.00 755.10C958.07 753.27 964.87 750.43 971.20 747.80C977.53 745.17 987.70 740.72 991.00 739.30" fill="none" stroke="#00ffff" stroke-width="1.8" stroke-linejoin="round"/><path d="M807.30 807.60C810.42 806.92 819.27 805.58 826.00 803.50C832.73 801.42 841.30 797.05 847.70 795.10C854.10 793.15 861.28 792.65 864.40 791.80C867.52 790.95 863.83 794.08 866.40 790.00C868.97 785.92 876.15 773.52 879.80 767.30C883.45 761.08 885.67 757.98 888.30 752.70C890.93 747.42 893.37 737.83 895.60 735.60C897.83 733.37 899.87 737.67 901.70 739.30C903.53 740.93 904.15 742.97 906.60 745.40C909.05 747.83 913.75 749.23 916.40 753.90C919.05 758.57 920.47 770.75 922.50 773.40C924.53 776.05 924.53 770.82 928.60 769.80C932.67 768.78 940.82 769.33 946.90 767.30C952.98 765.27 957.75 761.05 965.10 757.60C972.45 754.15 986.68 748.43 991.00 746.60" fill="none" stroke="#ff00ff" stroke-width="1.8" stroke-linejoin="round"/><path d="M807.30 830.20C811.82 829.08 824.32 824.90 834.40 823.50C844.48 822.10 858.90 822.92 867.80 821.80C876.70 820.68 882.80 819.02 887.80 816.80C892.80 814.58 895.02 809.88 897.80 808.50C900.58 807.12 901.15 809.07 904.50 808.50C907.85 807.93 911.50 807.88 917.90 805.10C924.30 802.32 934.55 796.53 942.90 791.80C951.25 787.07 959.98 781.15 968.00 776.70C976.02 772.25 987.17 767.03 991.00 765.10" fill="none" stroke="#ff0000" stroke-width="2" stroke-linejoin="round"/><path d="M807.30 831.00C811.82 830.17 824.32 827.12 834.40 826.00C844.48 824.88 857.78 826.12 867.80 824.30C877.82 822.48 888.38 816.90 894.50 815.10C900.62 813.30 896.43 816.83 904.50 813.50C912.57 810.17 932.32 800.67 942.90 795.10C953.48 789.53 959.98 784.68 968.00 780.10C976.02 775.52 987.17 769.68 991.00 767.60" fill="none" stroke="#00ff00" stroke-width="2" stroke-linejoin="round"/><path d="M807.30 833.50C811.82 832.80 824.32 830.13 834.40 829.30C844.48 828.47 856.67 830.02 867.80 828.50C878.93 826.98 888.68 825.22 901.20 820.20C913.72 815.18 931.77 804.53 942.90 798.40C954.03 792.27 959.98 787.70 968.00 783.40C976.02 779.10 987.17 774.40 991.00 772.60" fill="none" stroke="#0000ff" stroke-width="2" stroke-linejoin="round"/><path d="M807.30 839.30C811.82 838.33 824.32 834.75 834.40 833.50C844.48 832.25 856.67 833.33 867.80 831.80C878.93 830.27 888.68 829.02 901.20 824.30C913.72 819.58 931.77 809.48 942.90 803.50C954.03 797.52 959.98 793.00 968.00 788.40C976.02 783.80 987.17 777.98 991.00 775.90" fill="none" stroke="#ffff00" stroke-width="2" stroke-linejoin="round"/><path d="M807.30 843.50C811.82 842.53 824.32 838.95 834.40 837.70C844.48 836.45 856.67 837.82 867.80 836.00C878.93 834.18 888.68 831.67 901.20 826.80C913.72 821.93 931.77 812.63 942.90 806.80C954.03 800.97 959.98 796.53 968.00 791.80C976.02 787.07 987.17 780.63 991.00 778.40" fill="none" stroke="#00ffff" stroke-width="1.8" stroke-linejoin="round"/><rect x="905" y="576" width="2" height="462" fill="#2c8ed2"/><rect x="807" y="853" width="184" height="2" fill="#2c8ed2"/><g stroke="#2c8ed2" stroke-width="1" fill="none"><path d="M816.5 605V585.5H836"/><path d="M833 583l3 2.5-3 2.5M813.5 602l3 3 3-3"/></g>
<text x="838" y="590" font-family="Liberation Sans" font-size="8" fill="#2c8ed2">z</text><text x="814.5" y="614" font-family="Liberation Sans" font-size="8" fill="#2c8ed2">y</text></svg>
</body></html>
